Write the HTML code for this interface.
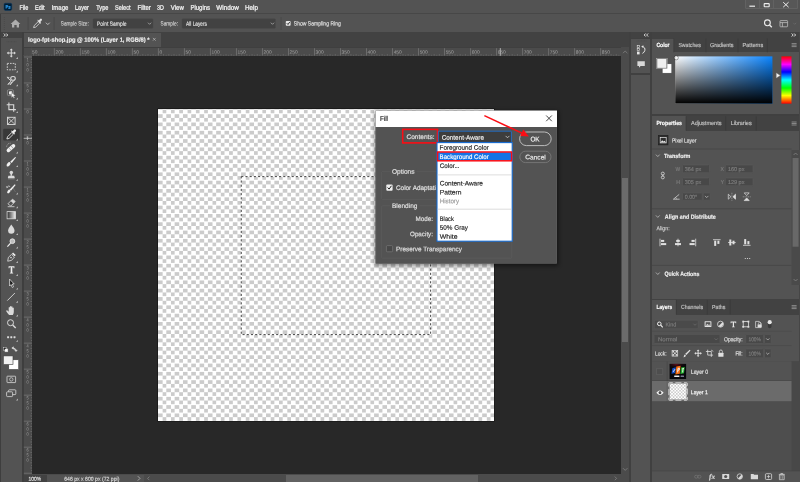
<!DOCTYPE html>
<html><head><meta charset="utf-8"><title>Photoshop - Fill</title>
<style>
html,body{margin:0;padding:0;background:#535353;}
body{width:800px;height:482px;overflow:hidden;position:relative;font-family:"Liberation Sans",sans-serif;}
#app{position:absolute;left:0;top:0;width:800px;height:482px;overflow:hidden;}
#app>div{position:absolute;}
.chk{background-color:#fff;background-image:conic-gradient(#cbcbcb 25%,#fff 0 50%,#cbcbcb 0 75%,#fff 0);}
svg#ov{position:absolute;left:0;top:0;will-change:transform;}
svg text{font-family:"Liberation Sans",sans-serif;white-space:pre;stroke-width:0.16px;text-rendering:geometricPrecision;}
</style></head><body><div id="app">
<div style="left:0.00px;top:0.00px;width:800.00px;height:482.00px;background:#535353;"></div>
<div style="left:0.00px;top:0.00px;width:800.00px;height:13.00px;background:#535353;"></div>
<div style="left:0.00px;top:13.00px;width:800.00px;height:1.00px;background:#474747;"></div>
<div style="left:0.00px;top:14.00px;width:800.00px;height:18.00px;background:#535353;"></div>
<div style="left:0.00px;top:32.00px;width:630.00px;height:15.00px;background:#424242;"></div>
<div style="left:23.50px;top:32.50px;width:137.50px;height:14.50px;background:#535353;"></div>
<div style="left:0.00px;top:37.50px;width:22.00px;height:444.50px;background:#535353;"></div>
<div style="left:0.00px;top:14.00px;width:1.20px;height:468.00px;background:#3e3e3e;"></div>
<div style="left:22.00px;top:32.00px;width:1.50px;height:450.00px;background:#3e3e3e;"></div>
<div style="left:23.50px;top:47.00px;width:597.30px;height:9.00px;background:#4b4b4b;"></div>
<div style="left:23.50px;top:47.00px;width:8.00px;height:428.00px;background:#4b4b4b;"></div>
<div style="left:23.50px;top:46.70px;width:605.90px;height:0.90px;background:#3f3f3f;"></div>
<div style="left:31.50px;top:56.00px;width:589.30px;height:418.00px;background:#282828;"></div>
<div style="left:620.80px;top:47.00px;width:8.60px;height:427.00px;background:#4b4b4b;"></div>
<div style="left:621.90px;top:177.50px;width:6.40px;height:164.20px;background:#6b6b6b;"></div>
<div style="left:23.50px;top:474.00px;width:605.90px;height:8.00px;background:#4b4b4b;"></div>
<div style="left:23.50px;top:475.00px;width:23.50px;height:7.00px;background:#424242;"></div>
<div style="left:47.00px;top:475.00px;width:97.00px;height:7.00px;background:#535353;"></div>
<div style="left:286.30px;top:475.00px;width:192.20px;height:7.00px;background:#626262;"></div>
<div style="left:629.40px;top:32.00px;width:170.60px;height:450.00px;background:#404040;"></div>
<div style="left:630.80px;top:32.00px;width:19.40px;height:5.80px;background:#424242;"></div>
<div style="left:630.80px;top:38.60px;width:19.40px;height:34.40px;background:#535353;"></div>
<div style="left:630.80px;top:75.00px;width:19.40px;height:407.00px;background:#535353;"></div>
<div style="left:652.20px;top:32.00px;width:147.80px;height:6.60px;background:#424242;"></div>
<div style="left:652.00px;top:38.50px;width:148.00px;height:13.80px;background:#424242;"></div>
<div style="left:652.00px;top:38.50px;width:21.70px;height:13.80px;background:#535353;"></div>
<div style="left:652.00px;top:52.30px;width:148.00px;height:62.20px;background:#535353;"></div>
<div style="left:652.00px;top:116.20px;width:148.00px;height:14.50px;background:#424242;"></div>
<div style="left:652.00px;top:116.20px;width:34.00px;height:14.50px;background:#535353;"></div>
<div style="left:652.00px;top:130.70px;width:148.00px;height:167.90px;background:#535353;"></div>
<div style="left:652.00px;top:299.40px;width:148.00px;height:15.20px;background:#424242;"></div>
<div style="left:652.00px;top:299.60px;width:24.30px;height:15.00px;background:#535353;"></div>
<div style="left:652.00px;top:314.60px;width:148.00px;height:167.40px;background:#535353;"></div>
<div style="left:799.00px;top:32.00px;width:1.00px;height:450.00px;background:#464646;"></div>
<div class="chk" style="left:158.00px;top:109.00px;width:336.11px;height:312.18px;background-size:8.325px 8.325px;background-position:0 0.6px;"></div>
<div style="left:745.20px;top:0.00px;width:14.40px;height:9.40px;background:#575757;border:0.5px solid #626262;border-top:0;box-sizing:border-box;border-radius:0 0 0 1.5px"></div>
<div style="left:759.60px;top:0.00px;width:14.80px;height:9.40px;background:#575757;border:0.5px solid #626262;border-top:0;border-left:0;box-sizing:border-box"></div>
<div style="left:774.40px;top:0.00px;width:23.60px;height:9.40px;background:#575757;border:0.5px solid #626262;border-top:0;border-left:0;box-sizing:border-box;border-radius:0 0 1.5px 0"></div>
<svg id="ov" width="800" height="482" viewBox="0 0 800 482">
<rect x="4.00" y="3.20" width="7.80" height="7.20" fill="#001e36" stroke="#0b3c66" stroke-width="0.5" rx="1.4" />
<text x="5.40" y="8.63" font-size="4.8" fill="#31a8ff" stroke="#31a8ff" font-weight="bold" textLength="5.20" lengthAdjust="spacingAndGlyphs" transform="rotate(0.05 5.4 8.6)">Ps</text>
<text style="stroke-width:0.3px" x="19.50" y="9.68" font-size="6.6" fill="#ececec" stroke="#ececec" textLength="8.80" lengthAdjust="spacingAndGlyphs" transform="rotate(0.05 19.5 9.7)">File</text>
<text style="stroke-width:0.3px" x="35.00" y="9.68" font-size="6.6" fill="#ececec" stroke="#ececec" textLength="9.50" lengthAdjust="spacingAndGlyphs" transform="rotate(0.05 35.0 9.7)">Edit</text>
<text style="stroke-width:0.3px" x="51.70" y="9.68" font-size="6.6" fill="#ececec" stroke="#ececec" textLength="16.60" lengthAdjust="spacingAndGlyphs" transform="rotate(0.05 51.7 9.7)">Image</text>
<text style="stroke-width:0.3px" x="75.00" y="9.68" font-size="6.6" fill="#ececec" stroke="#ececec" textLength="13.80" lengthAdjust="spacingAndGlyphs" transform="rotate(0.05 75.0 9.7)">Layer</text>
<text style="stroke-width:0.3px" x="96.30" y="9.68" font-size="6.6" fill="#ececec" stroke="#ececec" textLength="12.00" lengthAdjust="spacingAndGlyphs" transform="rotate(0.05 96.3 9.7)">Type</text>
<text style="stroke-width:0.3px" x="115.00" y="9.68" font-size="6.6" fill="#ececec" stroke="#ececec" textLength="15.50" lengthAdjust="spacingAndGlyphs" transform="rotate(0.05 115.0 9.7)">Select</text>
<text style="stroke-width:0.3px" x="137.50" y="9.68" font-size="6.6" fill="#ececec" stroke="#ececec" textLength="13.30" lengthAdjust="spacingAndGlyphs" transform="rotate(0.05 137.5 9.7)">Filter</text>
<text style="stroke-width:0.3px" x="157.00" y="9.68" font-size="6.6" fill="#ececec" stroke="#ececec" textLength="6.80" lengthAdjust="spacingAndGlyphs" transform="rotate(0.05 157.0 9.7)">3D</text>
<text style="stroke-width:0.3px" x="170.80" y="9.68" font-size="6.6" fill="#ececec" stroke="#ececec" textLength="13.00" lengthAdjust="spacingAndGlyphs" transform="rotate(0.05 170.8 9.7)">View</text>
<text style="stroke-width:0.3px" x="190.50" y="9.68" font-size="6.6" fill="#ececec" stroke="#ececec" textLength="19.50" lengthAdjust="spacingAndGlyphs" transform="rotate(0.05 190.5 9.7)">Plugins</text>
<text style="stroke-width:0.3px" x="216.30" y="9.68" font-size="6.6" fill="#ececec" stroke="#ececec" textLength="22.50" lengthAdjust="spacingAndGlyphs" transform="rotate(0.05 216.3 9.7)">Window</text>
<text style="stroke-width:0.3px" x="245.00" y="9.68" font-size="6.6" fill="#ececec" stroke="#ececec" textLength="13.00" lengthAdjust="spacingAndGlyphs" transform="rotate(0.05 245.0 9.7)">Help</text>
<line x1="749.40" y1="6.20" x2="755.00" y2="6.20" stroke="#ececec" stroke-width="1.2" />
<rect x="764.20" y="3.60" width="5.00" height="3.10" fill="none" stroke="#ececec" stroke-width="1.1" rx="0.5" />
<path d="M783.2 2.2 L788.6 7.2 M788.6 2.2 L783.2 7.2" fill="none" stroke="#ececec" stroke-width="1.0" />
<rect x="3.80" y="17.20" width="0.90" height="0.80" fill="#474747" stroke="none" stroke-width="1" rx="0" />
<rect x="3.80" y="19.20" width="0.90" height="0.80" fill="#474747" stroke="none" stroke-width="1" rx="0" />
<rect x="3.80" y="21.20" width="0.90" height="0.80" fill="#474747" stroke="none" stroke-width="1" rx="0" />
<rect x="3.80" y="23.20" width="0.90" height="0.80" fill="#474747" stroke="none" stroke-width="1" rx="0" />
<rect x="3.80" y="25.20" width="0.90" height="0.80" fill="#474747" stroke="none" stroke-width="1" rx="0" />
<rect x="3.80" y="27.20" width="0.90" height="0.80" fill="#474747" stroke="none" stroke-width="1" rx="0" />
<rect x="3.80" y="29.20" width="0.90" height="0.80" fill="#474747" stroke="none" stroke-width="1" rx="0" />
<path d="M10.6 24 L15.5 19.6 L20.4 24 L19 24 L19 27.6 L16.7 27.6 L16.7 25 L14.3 25 L14.3 27.6 L12 27.6 L12 24 Z" fill="#adadad" stroke="none" stroke-width="1" />
<line x1="28.10" y1="17.00" x2="28.10" y2="30.00" stroke="#474747" stroke-width="0.9" />
<path d="M33.6 27.6 L34.2 25.6 L38.3 21.5 L39.8 23 L35.7 27.1 Z" fill="none" stroke="#e0e0e0" stroke-width="0.8" />
<path d="M37.6 20.9 L40.4 23.7 L41.2 22.9 L40.3 22 L41.7 20.6 A1.1 1.1 0 0 0 40.1 19 L38.7 20.4 L37.8 19.5 Z" fill="#e0e0e0" stroke="none" stroke-width="1" />
<path d="M45.9 22.7 L47.8 24.6 L49.7 22.7" fill="none" stroke="#c8c8c8" stroke-width="0.9" />
<line x1="54.10" y1="17.00" x2="54.10" y2="30.00" stroke="#474747" stroke-width="0.9" />
<text x="60.80" y="25.56" font-size="6.0" fill="#cfcfcf" stroke="#cfcfcf" textLength="28.00" lengthAdjust="spacingAndGlyphs" transform="rotate(0.05 60.8 25.6)">Sample Size:</text>
<rect x="93.00" y="18.80" width="60.00" height="9.50" fill="#424242" stroke="#4a4a4a" stroke-width="0.5" rx="1" />
<text x="97.00" y="25.66" font-size="6.0" fill="#e0e0e0" stroke="#e0e0e0" textLength="29.50" lengthAdjust="spacingAndGlyphs" transform="rotate(0.05 97.0 25.7)">Point Sample</text>
<path d="M148 22.7 L149.6 24.3 L151.2 22.7" fill="none" stroke="#c0c0c0" stroke-width="0.7" />
<text x="160.50" y="25.56" font-size="6.0" fill="#cfcfcf" stroke="#cfcfcf" textLength="17.50" lengthAdjust="spacingAndGlyphs" transform="rotate(0.05 160.5 25.6)">Sample:</text>
<rect x="182.00" y="18.80" width="93.50" height="9.50" fill="#424242" stroke="#4a4a4a" stroke-width="0.5" rx="1" />
<text x="186.00" y="25.66" font-size="6.0" fill="#e0e0e0" stroke="#e0e0e0" textLength="21.00" lengthAdjust="spacingAndGlyphs" transform="rotate(0.05 186.0 25.7)">All Layers</text>
<path d="M270.9 22.7 L272.5 24.3 L274.1 22.7" fill="none" stroke="#c0c0c0" stroke-width="0.7" />
<line x1="281.00" y1="17.00" x2="281.00" y2="30.00" stroke="#474747" stroke-width="0.9" />
<rect x="285.80" y="20.90" width="4.80" height="4.80" fill="#e8e8e8" stroke="none" stroke-width="1" rx="0.8" />
<path d="M286.8 23.2 L288 24.5 L289.8 21.9" fill="none" stroke="#222" stroke-width="0.9" />
<text x="293.80" y="25.56" font-size="6.0" fill="#e0e0e0" stroke="#e0e0e0" textLength="47.00" lengthAdjust="spacingAndGlyphs" transform="rotate(0.05 293.8 25.6)">Show Sampling Ring</text>
<circle cx="767.4" cy="22.8" r="2.9" fill="none" stroke="#ececec" stroke-width="1.1"/>
<line x1="769.50" y1="25.00" x2="771.80" y2="27.20" stroke="#ececec" stroke-width="1.4" />
<rect x="780.00" y="20.60" width="7.60" height="6.20" fill="none" stroke="#bdbdbd" stroke-width="0.8" rx="0.6" />
<line x1="782.40" y1="22.60" x2="782.40" y2="26.80" stroke="#bdbdbd" stroke-width="0.8" />
<line x1="780.00" y1="22.60" x2="787.60" y2="22.60" stroke="#bdbdbd" stroke-width="0.8" />
<path d="M793.2 22.8 L794.7 24.3 L796.2 22.8" fill="none" stroke="#6e6e6e" stroke-width="0.7" />
<text x="28.00" y="41.63" font-size="6.2" fill="#f0f0f0" stroke="#f0f0f0" font-weight="bold" textLength="121.50" lengthAdjust="spacingAndGlyphs" transform="rotate(0.05 28.0 41.6)">logo-fpt-shop.jpg @ 100% (Layer 1, RGB/8) *</text>
<path d="M152.9 37.9 L155.7 40.7 M155.7 37.9 L152.9 40.7" fill="none" stroke="#c8c8c8" stroke-width="0.6" />
<path d="M3.8 33.5 L5.3 35 L3.8 36.5 M6.2 33.5 L7.7 35 L6.2 36.5" fill="none" stroke="#f4f4f4" stroke-width="0.9" />
<rect x="6.60" y="41.40" width="0.80" height="0.70" fill="#474747" stroke="none" stroke-width="1" rx="0" />
<rect x="8.10" y="41.40" width="0.80" height="0.70" fill="#474747" stroke="none" stroke-width="1" rx="0" />
<rect x="9.60" y="41.40" width="0.80" height="0.70" fill="#474747" stroke="none" stroke-width="1" rx="0" />
<rect x="11.10" y="41.40" width="0.80" height="0.70" fill="#474747" stroke="none" stroke-width="1" rx="0" />
<rect x="12.60" y="41.40" width="0.80" height="0.70" fill="#474747" stroke="none" stroke-width="1" rx="0" />
<rect x="14.10" y="41.40" width="0.80" height="0.70" fill="#474747" stroke="none" stroke-width="1" rx="0" />
<rect x="15.60" y="41.40" width="0.80" height="0.70" fill="#474747" stroke="none" stroke-width="1" rx="0" />
<g id="rulers">
<line x1="31.60" y1="47.60" x2="31.60" y2="55.80" stroke="#5e5e5e" stroke-width="0.5" stroke-dasharray="0.7 0.7"/>
<line x1="23.20" y1="55.40" x2="32.00" y2="55.40" stroke="#5e5e5e" stroke-width="0.5" stroke-dasharray="0.7 0.7"/>
<clipPath id="hr"><rect x="32.0" y="47.6" width="588.8" height="8.199999999999996"/></clipPath><g clip-path="url(#hr)">
<line x1="2.31" y1="48.20" x2="2.31" y2="55.80" stroke="#8a8a8a" stroke-width="0.55" />
<text x="3.41" y="53.76" font-size="4.9" fill="#a4a4a4" stroke="none" textLength="8.10" lengthAdjust="spacingAndGlyphs" transform="rotate(0.05 3.4 53.8)">300</text>
<line x1="28.33" y1="48.20" x2="28.33" y2="55.80" stroke="#8a8a8a" stroke-width="0.55" />
<text x="29.43" y="53.76" font-size="4.9" fill="#a4a4a4" stroke="none" textLength="8.10" lengthAdjust="spacingAndGlyphs" transform="rotate(0.05 29.4 53.8)">250</text>
<line x1="54.34" y1="48.20" x2="54.34" y2="55.80" stroke="#8a8a8a" stroke-width="0.55" />
<text x="55.44" y="53.76" font-size="4.9" fill="#a4a4a4" stroke="none" textLength="8.10" lengthAdjust="spacingAndGlyphs" transform="rotate(0.05 55.4 53.8)">200</text>
<line x1="80.36" y1="48.20" x2="80.36" y2="55.80" stroke="#8a8a8a" stroke-width="0.55" />
<text x="81.45" y="53.76" font-size="4.9" fill="#a4a4a4" stroke="none" textLength="8.10" lengthAdjust="spacingAndGlyphs" transform="rotate(0.05 81.5 53.8)">150</text>
<line x1="106.37" y1="48.20" x2="106.37" y2="55.80" stroke="#8a8a8a" stroke-width="0.55" />
<text x="107.47" y="53.76" font-size="4.9" fill="#a4a4a4" stroke="none" textLength="8.10" lengthAdjust="spacingAndGlyphs" transform="rotate(0.05 107.5 53.8)">100</text>
<line x1="132.38" y1="48.20" x2="132.38" y2="55.80" stroke="#8a8a8a" stroke-width="0.55" />
<text x="133.48" y="53.76" font-size="4.9" fill="#a4a4a4" stroke="none" textLength="5.40" lengthAdjust="spacingAndGlyphs" transform="rotate(0.05 133.5 53.8)">50</text>
<line x1="158.40" y1="48.20" x2="158.40" y2="55.80" stroke="#8a8a8a" stroke-width="0.55" />
<text x="159.50" y="53.76" font-size="4.9" fill="#a4a4a4" stroke="none" textLength="2.70" lengthAdjust="spacingAndGlyphs" transform="rotate(0.05 159.5 53.8)">0</text>
<line x1="184.42" y1="48.20" x2="184.42" y2="55.80" stroke="#8a8a8a" stroke-width="0.55" />
<text x="185.52" y="53.76" font-size="4.9" fill="#a4a4a4" stroke="none" textLength="5.40" lengthAdjust="spacingAndGlyphs" transform="rotate(0.05 185.5 53.8)">50</text>
<line x1="210.43" y1="48.20" x2="210.43" y2="55.80" stroke="#8a8a8a" stroke-width="0.55" />
<text x="211.53" y="53.76" font-size="4.9" fill="#a4a4a4" stroke="none" textLength="8.10" lengthAdjust="spacingAndGlyphs" transform="rotate(0.05 211.5 53.8)">100</text>
<line x1="236.44" y1="48.20" x2="236.44" y2="55.80" stroke="#8a8a8a" stroke-width="0.55" />
<text x="237.54" y="53.76" font-size="4.9" fill="#a4a4a4" stroke="none" textLength="8.10" lengthAdjust="spacingAndGlyphs" transform="rotate(0.05 237.5 53.8)">150</text>
<line x1="262.46" y1="48.20" x2="262.46" y2="55.80" stroke="#8a8a8a" stroke-width="0.55" />
<text x="263.56" y="53.76" font-size="4.9" fill="#a4a4a4" stroke="none" textLength="8.10" lengthAdjust="spacingAndGlyphs" transform="rotate(0.05 263.6 53.8)">200</text>
<line x1="288.48" y1="48.20" x2="288.48" y2="55.80" stroke="#8a8a8a" stroke-width="0.55" />
<text x="289.58" y="53.76" font-size="4.9" fill="#a4a4a4" stroke="none" textLength="8.10" lengthAdjust="spacingAndGlyphs" transform="rotate(0.05 289.6 53.8)">250</text>
<line x1="314.49" y1="48.20" x2="314.49" y2="55.80" stroke="#8a8a8a" stroke-width="0.55" />
<text x="315.59" y="53.76" font-size="4.9" fill="#a4a4a4" stroke="none" textLength="8.10" lengthAdjust="spacingAndGlyphs" transform="rotate(0.05 315.6 53.8)">300</text>
<line x1="340.50" y1="48.20" x2="340.50" y2="55.80" stroke="#8a8a8a" stroke-width="0.55" />
<text x="341.61" y="53.76" font-size="4.9" fill="#a4a4a4" stroke="none" textLength="8.10" lengthAdjust="spacingAndGlyphs" transform="rotate(0.05 341.6 53.8)">350</text>
<line x1="366.52" y1="48.20" x2="366.52" y2="55.80" stroke="#8a8a8a" stroke-width="0.55" />
<text x="367.62" y="53.76" font-size="4.9" fill="#a4a4a4" stroke="none" textLength="8.10" lengthAdjust="spacingAndGlyphs" transform="rotate(0.05 367.6 53.8)">400</text>
<line x1="392.53" y1="48.20" x2="392.53" y2="55.80" stroke="#8a8a8a" stroke-width="0.55" />
<text x="393.63" y="53.76" font-size="4.9" fill="#a4a4a4" stroke="none" textLength="8.10" lengthAdjust="spacingAndGlyphs" transform="rotate(0.05 393.6 53.8)">450</text>
<line x1="418.55" y1="48.20" x2="418.55" y2="55.80" stroke="#8a8a8a" stroke-width="0.55" />
<text x="419.65" y="53.76" font-size="4.9" fill="#a4a4a4" stroke="none" textLength="8.10" lengthAdjust="spacingAndGlyphs" transform="rotate(0.05 419.6 53.8)">500</text>
<line x1="444.56" y1="48.20" x2="444.56" y2="55.80" stroke="#8a8a8a" stroke-width="0.55" />
<text x="445.66" y="53.76" font-size="4.9" fill="#a4a4a4" stroke="none" textLength="8.10" lengthAdjust="spacingAndGlyphs" transform="rotate(0.05 445.7 53.8)">550</text>
<line x1="470.58" y1="48.20" x2="470.58" y2="55.80" stroke="#8a8a8a" stroke-width="0.55" />
<text x="471.68" y="53.76" font-size="4.9" fill="#a4a4a4" stroke="none" textLength="8.10" lengthAdjust="spacingAndGlyphs" transform="rotate(0.05 471.7 53.8)">600</text>
<line x1="496.60" y1="48.20" x2="496.60" y2="55.80" stroke="#8a8a8a" stroke-width="0.55" />
<text x="497.70" y="53.76" font-size="4.9" fill="#a4a4a4" stroke="none" textLength="8.10" lengthAdjust="spacingAndGlyphs" transform="rotate(0.05 497.7 53.8)">650</text>
<line x1="522.61" y1="48.20" x2="522.61" y2="55.80" stroke="#8a8a8a" stroke-width="0.55" />
<text x="523.71" y="53.76" font-size="4.9" fill="#a4a4a4" stroke="none" textLength="8.10" lengthAdjust="spacingAndGlyphs" transform="rotate(0.05 523.7 53.8)">700</text>
<line x1="548.62" y1="48.20" x2="548.62" y2="55.80" stroke="#8a8a8a" stroke-width="0.55" />
<text x="549.73" y="53.76" font-size="4.9" fill="#a4a4a4" stroke="none" textLength="8.10" lengthAdjust="spacingAndGlyphs" transform="rotate(0.05 549.7 53.8)">750</text>
<line x1="574.64" y1="48.20" x2="574.64" y2="55.80" stroke="#8a8a8a" stroke-width="0.55" />
<text x="575.74" y="53.76" font-size="4.9" fill="#a4a4a4" stroke="none" textLength="8.10" lengthAdjust="spacingAndGlyphs" transform="rotate(0.05 575.7 53.8)">800</text>
<line x1="600.65" y1="48.20" x2="600.65" y2="55.80" stroke="#8a8a8a" stroke-width="0.55" />
<text x="601.75" y="53.76" font-size="4.9" fill="#a4a4a4" stroke="none" textLength="8.10" lengthAdjust="spacingAndGlyphs" transform="rotate(0.05 601.8 53.8)">850</text>
<line x1="4.91" y1="54.80" x2="4.91" y2="55.80" stroke="#8a8a8a" stroke-width="0.45" />
<line x1="7.51" y1="54.20" x2="7.51" y2="55.80" stroke="#8a8a8a" stroke-width="0.45" />
<line x1="10.11" y1="54.80" x2="10.11" y2="55.80" stroke="#8a8a8a" stroke-width="0.45" />
<line x1="12.72" y1="54.20" x2="12.72" y2="55.80" stroke="#8a8a8a" stroke-width="0.45" />
<line x1="15.32" y1="54.80" x2="15.32" y2="55.80" stroke="#8a8a8a" stroke-width="0.45" />
<line x1="17.92" y1="54.20" x2="17.92" y2="55.80" stroke="#8a8a8a" stroke-width="0.45" />
<line x1="20.52" y1="54.80" x2="20.52" y2="55.80" stroke="#8a8a8a" stroke-width="0.45" />
<line x1="23.12" y1="54.20" x2="23.12" y2="55.80" stroke="#8a8a8a" stroke-width="0.45" />
<line x1="25.72" y1="54.80" x2="25.72" y2="55.80" stroke="#8a8a8a" stroke-width="0.45" />
<line x1="30.93" y1="54.80" x2="30.93" y2="55.80" stroke="#8a8a8a" stroke-width="0.45" />
<line x1="33.53" y1="54.20" x2="33.53" y2="55.80" stroke="#8a8a8a" stroke-width="0.45" />
<line x1="36.13" y1="54.80" x2="36.13" y2="55.80" stroke="#8a8a8a" stroke-width="0.45" />
<line x1="38.73" y1="54.20" x2="38.73" y2="55.80" stroke="#8a8a8a" stroke-width="0.45" />
<line x1="41.33" y1="54.80" x2="41.33" y2="55.80" stroke="#8a8a8a" stroke-width="0.45" />
<line x1="43.93" y1="54.20" x2="43.93" y2="55.80" stroke="#8a8a8a" stroke-width="0.45" />
<line x1="46.54" y1="54.80" x2="46.54" y2="55.80" stroke="#8a8a8a" stroke-width="0.45" />
<line x1="49.14" y1="54.20" x2="49.14" y2="55.80" stroke="#8a8a8a" stroke-width="0.45" />
<line x1="51.74" y1="54.80" x2="51.74" y2="55.80" stroke="#8a8a8a" stroke-width="0.45" />
<line x1="56.94" y1="54.80" x2="56.94" y2="55.80" stroke="#8a8a8a" stroke-width="0.45" />
<line x1="59.54" y1="54.20" x2="59.54" y2="55.80" stroke="#8a8a8a" stroke-width="0.45" />
<line x1="62.14" y1="54.80" x2="62.14" y2="55.80" stroke="#8a8a8a" stroke-width="0.45" />
<line x1="64.75" y1="54.20" x2="64.75" y2="55.80" stroke="#8a8a8a" stroke-width="0.45" />
<line x1="67.35" y1="54.80" x2="67.35" y2="55.80" stroke="#8a8a8a" stroke-width="0.45" />
<line x1="69.95" y1="54.20" x2="69.95" y2="55.80" stroke="#8a8a8a" stroke-width="0.45" />
<line x1="72.55" y1="54.80" x2="72.55" y2="55.80" stroke="#8a8a8a" stroke-width="0.45" />
<line x1="75.15" y1="54.20" x2="75.15" y2="55.80" stroke="#8a8a8a" stroke-width="0.45" />
<line x1="77.75" y1="54.80" x2="77.75" y2="55.80" stroke="#8a8a8a" stroke-width="0.45" />
<line x1="82.96" y1="54.80" x2="82.96" y2="55.80" stroke="#8a8a8a" stroke-width="0.45" />
<line x1="85.56" y1="54.20" x2="85.56" y2="55.80" stroke="#8a8a8a" stroke-width="0.45" />
<line x1="88.16" y1="54.80" x2="88.16" y2="55.80" stroke="#8a8a8a" stroke-width="0.45" />
<line x1="90.76" y1="54.20" x2="90.76" y2="55.80" stroke="#8a8a8a" stroke-width="0.45" />
<line x1="93.36" y1="54.80" x2="93.36" y2="55.80" stroke="#8a8a8a" stroke-width="0.45" />
<line x1="95.96" y1="54.20" x2="95.96" y2="55.80" stroke="#8a8a8a" stroke-width="0.45" />
<line x1="98.57" y1="54.80" x2="98.57" y2="55.80" stroke="#8a8a8a" stroke-width="0.45" />
<line x1="101.17" y1="54.20" x2="101.17" y2="55.80" stroke="#8a8a8a" stroke-width="0.45" />
<line x1="103.77" y1="54.80" x2="103.77" y2="55.80" stroke="#8a8a8a" stroke-width="0.45" />
<line x1="108.97" y1="54.80" x2="108.97" y2="55.80" stroke="#8a8a8a" stroke-width="0.45" />
<line x1="111.57" y1="54.20" x2="111.57" y2="55.80" stroke="#8a8a8a" stroke-width="0.45" />
<line x1="114.17" y1="54.80" x2="114.17" y2="55.80" stroke="#8a8a8a" stroke-width="0.45" />
<line x1="116.78" y1="54.20" x2="116.78" y2="55.80" stroke="#8a8a8a" stroke-width="0.45" />
<line x1="119.38" y1="54.80" x2="119.38" y2="55.80" stroke="#8a8a8a" stroke-width="0.45" />
<line x1="121.98" y1="54.20" x2="121.98" y2="55.80" stroke="#8a8a8a" stroke-width="0.45" />
<line x1="124.58" y1="54.80" x2="124.58" y2="55.80" stroke="#8a8a8a" stroke-width="0.45" />
<line x1="127.18" y1="54.20" x2="127.18" y2="55.80" stroke="#8a8a8a" stroke-width="0.45" />
<line x1="129.78" y1="54.80" x2="129.78" y2="55.80" stroke="#8a8a8a" stroke-width="0.45" />
<line x1="134.99" y1="54.80" x2="134.99" y2="55.80" stroke="#8a8a8a" stroke-width="0.45" />
<line x1="137.59" y1="54.20" x2="137.59" y2="55.80" stroke="#8a8a8a" stroke-width="0.45" />
<line x1="140.19" y1="54.80" x2="140.19" y2="55.80" stroke="#8a8a8a" stroke-width="0.45" />
<line x1="142.79" y1="54.20" x2="142.79" y2="55.80" stroke="#8a8a8a" stroke-width="0.45" />
<line x1="145.39" y1="54.80" x2="145.39" y2="55.80" stroke="#8a8a8a" stroke-width="0.45" />
<line x1="147.99" y1="54.20" x2="147.99" y2="55.80" stroke="#8a8a8a" stroke-width="0.45" />
<line x1="150.60" y1="54.80" x2="150.60" y2="55.80" stroke="#8a8a8a" stroke-width="0.45" />
<line x1="153.20" y1="54.20" x2="153.20" y2="55.80" stroke="#8a8a8a" stroke-width="0.45" />
<line x1="155.80" y1="54.80" x2="155.80" y2="55.80" stroke="#8a8a8a" stroke-width="0.45" />
<line x1="161.00" y1="54.80" x2="161.00" y2="55.80" stroke="#8a8a8a" stroke-width="0.45" />
<line x1="163.60" y1="54.20" x2="163.60" y2="55.80" stroke="#8a8a8a" stroke-width="0.45" />
<line x1="166.20" y1="54.80" x2="166.20" y2="55.80" stroke="#8a8a8a" stroke-width="0.45" />
<line x1="168.81" y1="54.20" x2="168.81" y2="55.80" stroke="#8a8a8a" stroke-width="0.45" />
<line x1="171.41" y1="54.80" x2="171.41" y2="55.80" stroke="#8a8a8a" stroke-width="0.45" />
<line x1="174.01" y1="54.20" x2="174.01" y2="55.80" stroke="#8a8a8a" stroke-width="0.45" />
<line x1="176.61" y1="54.80" x2="176.61" y2="55.80" stroke="#8a8a8a" stroke-width="0.45" />
<line x1="179.21" y1="54.20" x2="179.21" y2="55.80" stroke="#8a8a8a" stroke-width="0.45" />
<line x1="181.81" y1="54.80" x2="181.81" y2="55.80" stroke="#8a8a8a" stroke-width="0.45" />
<line x1="187.02" y1="54.80" x2="187.02" y2="55.80" stroke="#8a8a8a" stroke-width="0.45" />
<line x1="189.62" y1="54.20" x2="189.62" y2="55.80" stroke="#8a8a8a" stroke-width="0.45" />
<line x1="192.22" y1="54.80" x2="192.22" y2="55.80" stroke="#8a8a8a" stroke-width="0.45" />
<line x1="194.82" y1="54.20" x2="194.82" y2="55.80" stroke="#8a8a8a" stroke-width="0.45" />
<line x1="197.42" y1="54.80" x2="197.42" y2="55.80" stroke="#8a8a8a" stroke-width="0.45" />
<line x1="200.02" y1="54.20" x2="200.02" y2="55.80" stroke="#8a8a8a" stroke-width="0.45" />
<line x1="202.63" y1="54.80" x2="202.63" y2="55.80" stroke="#8a8a8a" stroke-width="0.45" />
<line x1="205.23" y1="54.20" x2="205.23" y2="55.80" stroke="#8a8a8a" stroke-width="0.45" />
<line x1="207.83" y1="54.80" x2="207.83" y2="55.80" stroke="#8a8a8a" stroke-width="0.45" />
<line x1="213.03" y1="54.80" x2="213.03" y2="55.80" stroke="#8a8a8a" stroke-width="0.45" />
<line x1="215.63" y1="54.20" x2="215.63" y2="55.80" stroke="#8a8a8a" stroke-width="0.45" />
<line x1="218.23" y1="54.80" x2="218.23" y2="55.80" stroke="#8a8a8a" stroke-width="0.45" />
<line x1="220.84" y1="54.20" x2="220.84" y2="55.80" stroke="#8a8a8a" stroke-width="0.45" />
<line x1="223.44" y1="54.80" x2="223.44" y2="55.80" stroke="#8a8a8a" stroke-width="0.45" />
<line x1="226.04" y1="54.20" x2="226.04" y2="55.80" stroke="#8a8a8a" stroke-width="0.45" />
<line x1="228.64" y1="54.80" x2="228.64" y2="55.80" stroke="#8a8a8a" stroke-width="0.45" />
<line x1="231.24" y1="54.20" x2="231.24" y2="55.80" stroke="#8a8a8a" stroke-width="0.45" />
<line x1="233.84" y1="54.80" x2="233.84" y2="55.80" stroke="#8a8a8a" stroke-width="0.45" />
<line x1="239.05" y1="54.80" x2="239.05" y2="55.80" stroke="#8a8a8a" stroke-width="0.45" />
<line x1="241.65" y1="54.20" x2="241.65" y2="55.80" stroke="#8a8a8a" stroke-width="0.45" />
<line x1="244.25" y1="54.80" x2="244.25" y2="55.80" stroke="#8a8a8a" stroke-width="0.45" />
<line x1="246.85" y1="54.20" x2="246.85" y2="55.80" stroke="#8a8a8a" stroke-width="0.45" />
<line x1="249.45" y1="54.80" x2="249.45" y2="55.80" stroke="#8a8a8a" stroke-width="0.45" />
<line x1="252.05" y1="54.20" x2="252.05" y2="55.80" stroke="#8a8a8a" stroke-width="0.45" />
<line x1="254.66" y1="54.80" x2="254.66" y2="55.80" stroke="#8a8a8a" stroke-width="0.45" />
<line x1="257.26" y1="54.20" x2="257.26" y2="55.80" stroke="#8a8a8a" stroke-width="0.45" />
<line x1="259.86" y1="54.80" x2="259.86" y2="55.80" stroke="#8a8a8a" stroke-width="0.45" />
<line x1="265.06" y1="54.80" x2="265.06" y2="55.80" stroke="#8a8a8a" stroke-width="0.45" />
<line x1="267.66" y1="54.20" x2="267.66" y2="55.80" stroke="#8a8a8a" stroke-width="0.45" />
<line x1="270.26" y1="54.80" x2="270.26" y2="55.80" stroke="#8a8a8a" stroke-width="0.45" />
<line x1="272.87" y1="54.20" x2="272.87" y2="55.80" stroke="#8a8a8a" stroke-width="0.45" />
<line x1="275.47" y1="54.80" x2="275.47" y2="55.80" stroke="#8a8a8a" stroke-width="0.45" />
<line x1="278.07" y1="54.20" x2="278.07" y2="55.80" stroke="#8a8a8a" stroke-width="0.45" />
<line x1="280.67" y1="54.80" x2="280.67" y2="55.80" stroke="#8a8a8a" stroke-width="0.45" />
<line x1="283.27" y1="54.20" x2="283.27" y2="55.80" stroke="#8a8a8a" stroke-width="0.45" />
<line x1="285.87" y1="54.80" x2="285.87" y2="55.80" stroke="#8a8a8a" stroke-width="0.45" />
<line x1="291.08" y1="54.80" x2="291.08" y2="55.80" stroke="#8a8a8a" stroke-width="0.45" />
<line x1="293.68" y1="54.20" x2="293.68" y2="55.80" stroke="#8a8a8a" stroke-width="0.45" />
<line x1="296.28" y1="54.80" x2="296.28" y2="55.80" stroke="#8a8a8a" stroke-width="0.45" />
<line x1="298.88" y1="54.20" x2="298.88" y2="55.80" stroke="#8a8a8a" stroke-width="0.45" />
<line x1="301.48" y1="54.80" x2="301.48" y2="55.80" stroke="#8a8a8a" stroke-width="0.45" />
<line x1="304.08" y1="54.20" x2="304.08" y2="55.80" stroke="#8a8a8a" stroke-width="0.45" />
<line x1="306.69" y1="54.80" x2="306.69" y2="55.80" stroke="#8a8a8a" stroke-width="0.45" />
<line x1="309.29" y1="54.20" x2="309.29" y2="55.80" stroke="#8a8a8a" stroke-width="0.45" />
<line x1="311.89" y1="54.80" x2="311.89" y2="55.80" stroke="#8a8a8a" stroke-width="0.45" />
<line x1="317.09" y1="54.80" x2="317.09" y2="55.80" stroke="#8a8a8a" stroke-width="0.45" />
<line x1="319.69" y1="54.20" x2="319.69" y2="55.80" stroke="#8a8a8a" stroke-width="0.45" />
<line x1="322.29" y1="54.80" x2="322.29" y2="55.80" stroke="#8a8a8a" stroke-width="0.45" />
<line x1="324.90" y1="54.20" x2="324.90" y2="55.80" stroke="#8a8a8a" stroke-width="0.45" />
<line x1="327.50" y1="54.80" x2="327.50" y2="55.80" stroke="#8a8a8a" stroke-width="0.45" />
<line x1="330.10" y1="54.20" x2="330.10" y2="55.80" stroke="#8a8a8a" stroke-width="0.45" />
<line x1="332.70" y1="54.80" x2="332.70" y2="55.80" stroke="#8a8a8a" stroke-width="0.45" />
<line x1="335.30" y1="54.20" x2="335.30" y2="55.80" stroke="#8a8a8a" stroke-width="0.45" />
<line x1="337.90" y1="54.80" x2="337.90" y2="55.80" stroke="#8a8a8a" stroke-width="0.45" />
<line x1="343.11" y1="54.80" x2="343.11" y2="55.80" stroke="#8a8a8a" stroke-width="0.45" />
<line x1="345.71" y1="54.20" x2="345.71" y2="55.80" stroke="#8a8a8a" stroke-width="0.45" />
<line x1="348.31" y1="54.80" x2="348.31" y2="55.80" stroke="#8a8a8a" stroke-width="0.45" />
<line x1="350.91" y1="54.20" x2="350.91" y2="55.80" stroke="#8a8a8a" stroke-width="0.45" />
<line x1="353.51" y1="54.80" x2="353.51" y2="55.80" stroke="#8a8a8a" stroke-width="0.45" />
<line x1="356.11" y1="54.20" x2="356.11" y2="55.80" stroke="#8a8a8a" stroke-width="0.45" />
<line x1="358.72" y1="54.80" x2="358.72" y2="55.80" stroke="#8a8a8a" stroke-width="0.45" />
<line x1="361.32" y1="54.20" x2="361.32" y2="55.80" stroke="#8a8a8a" stroke-width="0.45" />
<line x1="363.92" y1="54.80" x2="363.92" y2="55.80" stroke="#8a8a8a" stroke-width="0.45" />
<line x1="369.12" y1="54.80" x2="369.12" y2="55.80" stroke="#8a8a8a" stroke-width="0.45" />
<line x1="371.72" y1="54.20" x2="371.72" y2="55.80" stroke="#8a8a8a" stroke-width="0.45" />
<line x1="374.32" y1="54.80" x2="374.32" y2="55.80" stroke="#8a8a8a" stroke-width="0.45" />
<line x1="376.93" y1="54.20" x2="376.93" y2="55.80" stroke="#8a8a8a" stroke-width="0.45" />
<line x1="379.53" y1="54.80" x2="379.53" y2="55.80" stroke="#8a8a8a" stroke-width="0.45" />
<line x1="382.13" y1="54.20" x2="382.13" y2="55.80" stroke="#8a8a8a" stroke-width="0.45" />
<line x1="384.73" y1="54.80" x2="384.73" y2="55.80" stroke="#8a8a8a" stroke-width="0.45" />
<line x1="387.33" y1="54.20" x2="387.33" y2="55.80" stroke="#8a8a8a" stroke-width="0.45" />
<line x1="389.93" y1="54.80" x2="389.93" y2="55.80" stroke="#8a8a8a" stroke-width="0.45" />
<line x1="395.14" y1="54.80" x2="395.14" y2="55.80" stroke="#8a8a8a" stroke-width="0.45" />
<line x1="397.74" y1="54.20" x2="397.74" y2="55.80" stroke="#8a8a8a" stroke-width="0.45" />
<line x1="400.34" y1="54.80" x2="400.34" y2="55.80" stroke="#8a8a8a" stroke-width="0.45" />
<line x1="402.94" y1="54.20" x2="402.94" y2="55.80" stroke="#8a8a8a" stroke-width="0.45" />
<line x1="405.54" y1="54.80" x2="405.54" y2="55.80" stroke="#8a8a8a" stroke-width="0.45" />
<line x1="408.14" y1="54.20" x2="408.14" y2="55.80" stroke="#8a8a8a" stroke-width="0.45" />
<line x1="410.75" y1="54.80" x2="410.75" y2="55.80" stroke="#8a8a8a" stroke-width="0.45" />
<line x1="413.35" y1="54.20" x2="413.35" y2="55.80" stroke="#8a8a8a" stroke-width="0.45" />
<line x1="415.95" y1="54.80" x2="415.95" y2="55.80" stroke="#8a8a8a" stroke-width="0.45" />
<line x1="421.15" y1="54.80" x2="421.15" y2="55.80" stroke="#8a8a8a" stroke-width="0.45" />
<line x1="423.75" y1="54.20" x2="423.75" y2="55.80" stroke="#8a8a8a" stroke-width="0.45" />
<line x1="426.35" y1="54.80" x2="426.35" y2="55.80" stroke="#8a8a8a" stroke-width="0.45" />
<line x1="428.96" y1="54.20" x2="428.96" y2="55.80" stroke="#8a8a8a" stroke-width="0.45" />
<line x1="431.56" y1="54.80" x2="431.56" y2="55.80" stroke="#8a8a8a" stroke-width="0.45" />
<line x1="434.16" y1="54.20" x2="434.16" y2="55.80" stroke="#8a8a8a" stroke-width="0.45" />
<line x1="436.76" y1="54.80" x2="436.76" y2="55.80" stroke="#8a8a8a" stroke-width="0.45" />
<line x1="439.36" y1="54.20" x2="439.36" y2="55.80" stroke="#8a8a8a" stroke-width="0.45" />
<line x1="441.96" y1="54.80" x2="441.96" y2="55.80" stroke="#8a8a8a" stroke-width="0.45" />
<line x1="447.17" y1="54.80" x2="447.17" y2="55.80" stroke="#8a8a8a" stroke-width="0.45" />
<line x1="449.77" y1="54.20" x2="449.77" y2="55.80" stroke="#8a8a8a" stroke-width="0.45" />
<line x1="452.37" y1="54.80" x2="452.37" y2="55.80" stroke="#8a8a8a" stroke-width="0.45" />
<line x1="454.97" y1="54.20" x2="454.97" y2="55.80" stroke="#8a8a8a" stroke-width="0.45" />
<line x1="457.57" y1="54.80" x2="457.57" y2="55.80" stroke="#8a8a8a" stroke-width="0.45" />
<line x1="460.17" y1="54.20" x2="460.17" y2="55.80" stroke="#8a8a8a" stroke-width="0.45" />
<line x1="462.78" y1="54.80" x2="462.78" y2="55.80" stroke="#8a8a8a" stroke-width="0.45" />
<line x1="465.38" y1="54.20" x2="465.38" y2="55.80" stroke="#8a8a8a" stroke-width="0.45" />
<line x1="467.98" y1="54.80" x2="467.98" y2="55.80" stroke="#8a8a8a" stroke-width="0.45" />
<line x1="473.18" y1="54.80" x2="473.18" y2="55.80" stroke="#8a8a8a" stroke-width="0.45" />
<line x1="475.78" y1="54.20" x2="475.78" y2="55.80" stroke="#8a8a8a" stroke-width="0.45" />
<line x1="478.38" y1="54.80" x2="478.38" y2="55.80" stroke="#8a8a8a" stroke-width="0.45" />
<line x1="480.99" y1="54.20" x2="480.99" y2="55.80" stroke="#8a8a8a" stroke-width="0.45" />
<line x1="483.59" y1="54.80" x2="483.59" y2="55.80" stroke="#8a8a8a" stroke-width="0.45" />
<line x1="486.19" y1="54.20" x2="486.19" y2="55.80" stroke="#8a8a8a" stroke-width="0.45" />
<line x1="488.79" y1="54.80" x2="488.79" y2="55.80" stroke="#8a8a8a" stroke-width="0.45" />
<line x1="491.39" y1="54.20" x2="491.39" y2="55.80" stroke="#8a8a8a" stroke-width="0.45" />
<line x1="493.99" y1="54.80" x2="493.99" y2="55.80" stroke="#8a8a8a" stroke-width="0.45" />
<line x1="499.20" y1="54.80" x2="499.20" y2="55.80" stroke="#8a8a8a" stroke-width="0.45" />
<line x1="501.80" y1="54.20" x2="501.80" y2="55.80" stroke="#8a8a8a" stroke-width="0.45" />
<line x1="504.40" y1="54.80" x2="504.40" y2="55.80" stroke="#8a8a8a" stroke-width="0.45" />
<line x1="507.00" y1="54.20" x2="507.00" y2="55.80" stroke="#8a8a8a" stroke-width="0.45" />
<line x1="509.60" y1="54.80" x2="509.60" y2="55.80" stroke="#8a8a8a" stroke-width="0.45" />
<line x1="512.20" y1="54.20" x2="512.20" y2="55.80" stroke="#8a8a8a" stroke-width="0.45" />
<line x1="514.81" y1="54.80" x2="514.81" y2="55.80" stroke="#8a8a8a" stroke-width="0.45" />
<line x1="517.41" y1="54.20" x2="517.41" y2="55.80" stroke="#8a8a8a" stroke-width="0.45" />
<line x1="520.01" y1="54.80" x2="520.01" y2="55.80" stroke="#8a8a8a" stroke-width="0.45" />
<line x1="525.21" y1="54.80" x2="525.21" y2="55.80" stroke="#8a8a8a" stroke-width="0.45" />
<line x1="527.81" y1="54.20" x2="527.81" y2="55.80" stroke="#8a8a8a" stroke-width="0.45" />
<line x1="530.41" y1="54.80" x2="530.41" y2="55.80" stroke="#8a8a8a" stroke-width="0.45" />
<line x1="533.02" y1="54.20" x2="533.02" y2="55.80" stroke="#8a8a8a" stroke-width="0.45" />
<line x1="535.62" y1="54.80" x2="535.62" y2="55.80" stroke="#8a8a8a" stroke-width="0.45" />
<line x1="538.22" y1="54.20" x2="538.22" y2="55.80" stroke="#8a8a8a" stroke-width="0.45" />
<line x1="540.82" y1="54.80" x2="540.82" y2="55.80" stroke="#8a8a8a" stroke-width="0.45" />
<line x1="543.42" y1="54.20" x2="543.42" y2="55.80" stroke="#8a8a8a" stroke-width="0.45" />
<line x1="546.02" y1="54.80" x2="546.02" y2="55.80" stroke="#8a8a8a" stroke-width="0.45" />
<line x1="551.23" y1="54.80" x2="551.23" y2="55.80" stroke="#8a8a8a" stroke-width="0.45" />
<line x1="553.83" y1="54.20" x2="553.83" y2="55.80" stroke="#8a8a8a" stroke-width="0.45" />
<line x1="556.43" y1="54.80" x2="556.43" y2="55.80" stroke="#8a8a8a" stroke-width="0.45" />
<line x1="559.03" y1="54.20" x2="559.03" y2="55.80" stroke="#8a8a8a" stroke-width="0.45" />
<line x1="561.63" y1="54.80" x2="561.63" y2="55.80" stroke="#8a8a8a" stroke-width="0.45" />
<line x1="564.23" y1="54.20" x2="564.23" y2="55.80" stroke="#8a8a8a" stroke-width="0.45" />
<line x1="566.84" y1="54.80" x2="566.84" y2="55.80" stroke="#8a8a8a" stroke-width="0.45" />
<line x1="569.44" y1="54.20" x2="569.44" y2="55.80" stroke="#8a8a8a" stroke-width="0.45" />
<line x1="572.04" y1="54.80" x2="572.04" y2="55.80" stroke="#8a8a8a" stroke-width="0.45" />
<line x1="577.24" y1="54.80" x2="577.24" y2="55.80" stroke="#8a8a8a" stroke-width="0.45" />
<line x1="579.84" y1="54.20" x2="579.84" y2="55.80" stroke="#8a8a8a" stroke-width="0.45" />
<line x1="582.44" y1="54.80" x2="582.44" y2="55.80" stroke="#8a8a8a" stroke-width="0.45" />
<line x1="585.05" y1="54.20" x2="585.05" y2="55.80" stroke="#8a8a8a" stroke-width="0.45" />
<line x1="587.65" y1="54.80" x2="587.65" y2="55.80" stroke="#8a8a8a" stroke-width="0.45" />
<line x1="590.25" y1="54.20" x2="590.25" y2="55.80" stroke="#8a8a8a" stroke-width="0.45" />
<line x1="592.85" y1="54.80" x2="592.85" y2="55.80" stroke="#8a8a8a" stroke-width="0.45" />
<line x1="595.45" y1="54.20" x2="595.45" y2="55.80" stroke="#8a8a8a" stroke-width="0.45" />
<line x1="598.05" y1="54.80" x2="598.05" y2="55.80" stroke="#8a8a8a" stroke-width="0.45" />
<line x1="603.26" y1="54.80" x2="603.26" y2="55.80" stroke="#8a8a8a" stroke-width="0.45" />
<line x1="605.86" y1="54.20" x2="605.86" y2="55.80" stroke="#8a8a8a" stroke-width="0.45" />
<line x1="608.46" y1="54.80" x2="608.46" y2="55.80" stroke="#8a8a8a" stroke-width="0.45" />
<line x1="611.06" y1="54.20" x2="611.06" y2="55.80" stroke="#8a8a8a" stroke-width="0.45" />
<line x1="613.66" y1="54.80" x2="613.66" y2="55.80" stroke="#8a8a8a" stroke-width="0.45" />
<line x1="616.26" y1="54.20" x2="616.26" y2="55.80" stroke="#8a8a8a" stroke-width="0.45" />
<line x1="618.87" y1="54.80" x2="618.87" y2="55.80" stroke="#8a8a8a" stroke-width="0.45" />
</g>
<clipPath id="vr"><rect x="23.2" y="55.8" width="8.8" height="418.2"/></clipPath><g clip-path="url(#vr)">
<line x1="23.80" y1="56.97" x2="32.00" y2="56.97" stroke="#8a8a8a" stroke-width="0.55" />
<text x="26.40" y="61.33" font-size="4.6" fill="#9a9a9a" stroke="none" textLength="2.20" lengthAdjust="spacingAndGlyphs" transform="rotate(0.05 26.4 61.3)">1</text>
<text x="26.40" y="66.33" font-size="4.6" fill="#9a9a9a" stroke="none" textLength="2.20" lengthAdjust="spacingAndGlyphs" transform="rotate(0.05 26.4 66.3)">0</text>
<text x="26.40" y="71.33" font-size="4.6" fill="#9a9a9a" stroke="none" textLength="2.20" lengthAdjust="spacingAndGlyphs" transform="rotate(0.05 26.4 71.3)">0</text>
<line x1="23.80" y1="82.98" x2="32.00" y2="82.98" stroke="#8a8a8a" stroke-width="0.55" />
<text x="26.40" y="87.34" font-size="4.6" fill="#9a9a9a" stroke="none" textLength="2.20" lengthAdjust="spacingAndGlyphs" transform="rotate(0.05 26.4 87.3)">5</text>
<text x="26.40" y="92.34" font-size="4.6" fill="#9a9a9a" stroke="none" textLength="2.20" lengthAdjust="spacingAndGlyphs" transform="rotate(0.05 26.4 92.3)">0</text>
<line x1="23.80" y1="109.00" x2="32.00" y2="109.00" stroke="#8a8a8a" stroke-width="0.55" />
<text x="26.40" y="113.36" font-size="4.6" fill="#9a9a9a" stroke="none" textLength="2.20" lengthAdjust="spacingAndGlyphs" transform="rotate(0.05 26.4 113.4)">0</text>
<line x1="23.80" y1="135.01" x2="32.00" y2="135.01" stroke="#8a8a8a" stroke-width="0.55" />
<text x="26.40" y="139.37" font-size="4.6" fill="#9a9a9a" stroke="none" textLength="2.20" lengthAdjust="spacingAndGlyphs" transform="rotate(0.05 26.4 139.4)">5</text>
<text x="26.40" y="144.37" font-size="4.6" fill="#9a9a9a" stroke="none" textLength="2.20" lengthAdjust="spacingAndGlyphs" transform="rotate(0.05 26.4 144.4)">0</text>
<line x1="23.80" y1="161.03" x2="32.00" y2="161.03" stroke="#8a8a8a" stroke-width="0.55" />
<text x="26.40" y="165.39" font-size="4.6" fill="#9a9a9a" stroke="none" textLength="2.20" lengthAdjust="spacingAndGlyphs" transform="rotate(0.05 26.4 165.4)">1</text>
<text x="26.40" y="170.39" font-size="4.6" fill="#9a9a9a" stroke="none" textLength="2.20" lengthAdjust="spacingAndGlyphs" transform="rotate(0.05 26.4 170.4)">0</text>
<text x="26.40" y="175.39" font-size="4.6" fill="#9a9a9a" stroke="none" textLength="2.20" lengthAdjust="spacingAndGlyphs" transform="rotate(0.05 26.4 175.4)">0</text>
<line x1="23.80" y1="187.05" x2="32.00" y2="187.05" stroke="#8a8a8a" stroke-width="0.55" />
<text x="26.40" y="191.40" font-size="4.6" fill="#9a9a9a" stroke="none" textLength="2.20" lengthAdjust="spacingAndGlyphs" transform="rotate(0.05 26.4 191.4)">1</text>
<text x="26.40" y="196.40" font-size="4.6" fill="#9a9a9a" stroke="none" textLength="2.20" lengthAdjust="spacingAndGlyphs" transform="rotate(0.05 26.4 196.4)">5</text>
<text x="26.40" y="201.40" font-size="4.6" fill="#9a9a9a" stroke="none" textLength="2.20" lengthAdjust="spacingAndGlyphs" transform="rotate(0.05 26.4 201.4)">0</text>
<line x1="23.80" y1="213.06" x2="32.00" y2="213.06" stroke="#8a8a8a" stroke-width="0.55" />
<text x="26.40" y="217.42" font-size="4.6" fill="#9a9a9a" stroke="none" textLength="2.20" lengthAdjust="spacingAndGlyphs" transform="rotate(0.05 26.4 217.4)">2</text>
<text x="26.40" y="222.42" font-size="4.6" fill="#9a9a9a" stroke="none" textLength="2.20" lengthAdjust="spacingAndGlyphs" transform="rotate(0.05 26.4 222.4)">0</text>
<text x="26.40" y="227.42" font-size="4.6" fill="#9a9a9a" stroke="none" textLength="2.20" lengthAdjust="spacingAndGlyphs" transform="rotate(0.05 26.4 227.4)">0</text>
<line x1="23.80" y1="239.07" x2="32.00" y2="239.07" stroke="#8a8a8a" stroke-width="0.55" />
<text x="26.40" y="243.43" font-size="4.6" fill="#9a9a9a" stroke="none" textLength="2.20" lengthAdjust="spacingAndGlyphs" transform="rotate(0.05 26.4 243.4)">2</text>
<text x="26.40" y="248.43" font-size="4.6" fill="#9a9a9a" stroke="none" textLength="2.20" lengthAdjust="spacingAndGlyphs" transform="rotate(0.05 26.4 248.4)">5</text>
<text x="26.40" y="253.43" font-size="4.6" fill="#9a9a9a" stroke="none" textLength="2.20" lengthAdjust="spacingAndGlyphs" transform="rotate(0.05 26.4 253.4)">0</text>
<line x1="23.80" y1="265.09" x2="32.00" y2="265.09" stroke="#8a8a8a" stroke-width="0.55" />
<text x="26.40" y="269.45" font-size="4.6" fill="#9a9a9a" stroke="none" textLength="2.20" lengthAdjust="spacingAndGlyphs" transform="rotate(0.05 26.4 269.4)">3</text>
<text x="26.40" y="274.45" font-size="4.6" fill="#9a9a9a" stroke="none" textLength="2.20" lengthAdjust="spacingAndGlyphs" transform="rotate(0.05 26.4 274.4)">0</text>
<text x="26.40" y="279.45" font-size="4.6" fill="#9a9a9a" stroke="none" textLength="2.20" lengthAdjust="spacingAndGlyphs" transform="rotate(0.05 26.4 279.4)">0</text>
<line x1="23.80" y1="291.11" x2="32.00" y2="291.11" stroke="#8a8a8a" stroke-width="0.55" />
<text x="26.40" y="295.46" font-size="4.6" fill="#9a9a9a" stroke="none" textLength="2.20" lengthAdjust="spacingAndGlyphs" transform="rotate(0.05 26.4 295.5)">3</text>
<text x="26.40" y="300.46" font-size="4.6" fill="#9a9a9a" stroke="none" textLength="2.20" lengthAdjust="spacingAndGlyphs" transform="rotate(0.05 26.4 300.5)">5</text>
<text x="26.40" y="305.46" font-size="4.6" fill="#9a9a9a" stroke="none" textLength="2.20" lengthAdjust="spacingAndGlyphs" transform="rotate(0.05 26.4 305.5)">0</text>
<line x1="23.80" y1="317.12" x2="32.00" y2="317.12" stroke="#8a8a8a" stroke-width="0.55" />
<text x="26.40" y="321.48" font-size="4.6" fill="#9a9a9a" stroke="none" textLength="2.20" lengthAdjust="spacingAndGlyphs" transform="rotate(0.05 26.4 321.5)">4</text>
<text x="26.40" y="326.48" font-size="4.6" fill="#9a9a9a" stroke="none" textLength="2.20" lengthAdjust="spacingAndGlyphs" transform="rotate(0.05 26.4 326.5)">0</text>
<text x="26.40" y="331.48" font-size="4.6" fill="#9a9a9a" stroke="none" textLength="2.20" lengthAdjust="spacingAndGlyphs" transform="rotate(0.05 26.4 331.5)">0</text>
<line x1="23.80" y1="343.13" x2="32.00" y2="343.13" stroke="#8a8a8a" stroke-width="0.55" />
<text x="26.40" y="347.49" font-size="4.6" fill="#9a9a9a" stroke="none" textLength="2.20" lengthAdjust="spacingAndGlyphs" transform="rotate(0.05 26.4 347.5)">4</text>
<text x="26.40" y="352.49" font-size="4.6" fill="#9a9a9a" stroke="none" textLength="2.20" lengthAdjust="spacingAndGlyphs" transform="rotate(0.05 26.4 352.5)">5</text>
<text x="26.40" y="357.49" font-size="4.6" fill="#9a9a9a" stroke="none" textLength="2.20" lengthAdjust="spacingAndGlyphs" transform="rotate(0.05 26.4 357.5)">0</text>
<line x1="23.80" y1="369.15" x2="32.00" y2="369.15" stroke="#8a8a8a" stroke-width="0.55" />
<text x="26.40" y="373.51" font-size="4.6" fill="#9a9a9a" stroke="none" textLength="2.20" lengthAdjust="spacingAndGlyphs" transform="rotate(0.05 26.4 373.5)">5</text>
<text x="26.40" y="378.51" font-size="4.6" fill="#9a9a9a" stroke="none" textLength="2.20" lengthAdjust="spacingAndGlyphs" transform="rotate(0.05 26.4 378.5)">0</text>
<text x="26.40" y="383.51" font-size="4.6" fill="#9a9a9a" stroke="none" textLength="2.20" lengthAdjust="spacingAndGlyphs" transform="rotate(0.05 26.4 383.5)">0</text>
<line x1="23.80" y1="395.16" x2="32.00" y2="395.16" stroke="#8a8a8a" stroke-width="0.55" />
<text x="26.40" y="399.52" font-size="4.6" fill="#9a9a9a" stroke="none" textLength="2.20" lengthAdjust="spacingAndGlyphs" transform="rotate(0.05 26.4 399.5)">5</text>
<text x="26.40" y="404.52" font-size="4.6" fill="#9a9a9a" stroke="none" textLength="2.20" lengthAdjust="spacingAndGlyphs" transform="rotate(0.05 26.4 404.5)">5</text>
<text x="26.40" y="409.52" font-size="4.6" fill="#9a9a9a" stroke="none" textLength="2.20" lengthAdjust="spacingAndGlyphs" transform="rotate(0.05 26.4 409.5)">0</text>
<line x1="23.80" y1="421.18" x2="32.00" y2="421.18" stroke="#8a8a8a" stroke-width="0.55" />
<text x="26.40" y="425.54" font-size="4.6" fill="#9a9a9a" stroke="none" textLength="2.20" lengthAdjust="spacingAndGlyphs" transform="rotate(0.05 26.4 425.5)">6</text>
<text x="26.40" y="430.54" font-size="4.6" fill="#9a9a9a" stroke="none" textLength="2.20" lengthAdjust="spacingAndGlyphs" transform="rotate(0.05 26.4 430.5)">0</text>
<text x="26.40" y="435.54" font-size="4.6" fill="#9a9a9a" stroke="none" textLength="2.20" lengthAdjust="spacingAndGlyphs" transform="rotate(0.05 26.4 435.5)">0</text>
<line x1="23.80" y1="447.19" x2="32.00" y2="447.19" stroke="#8a8a8a" stroke-width="0.55" />
<text x="26.40" y="451.55" font-size="4.6" fill="#9a9a9a" stroke="none" textLength="2.20" lengthAdjust="spacingAndGlyphs" transform="rotate(0.05 26.4 451.6)">6</text>
<text x="26.40" y="456.55" font-size="4.6" fill="#9a9a9a" stroke="none" textLength="2.20" lengthAdjust="spacingAndGlyphs" transform="rotate(0.05 26.4 456.6)">5</text>
<text x="26.40" y="461.55" font-size="4.6" fill="#9a9a9a" stroke="none" textLength="2.20" lengthAdjust="spacingAndGlyphs" transform="rotate(0.05 26.4 461.6)">0</text>
<line x1="23.80" y1="473.21" x2="32.00" y2="473.21" stroke="#8a8a8a" stroke-width="0.55" />
<text x="26.40" y="477.57" font-size="4.6" fill="#9a9a9a" stroke="none" textLength="2.20" lengthAdjust="spacingAndGlyphs" transform="rotate(0.05 26.4 477.6)">7</text>
<text x="26.40" y="482.57" font-size="4.6" fill="#9a9a9a" stroke="none" textLength="2.20" lengthAdjust="spacingAndGlyphs" transform="rotate(0.05 26.4 482.6)">0</text>
<text x="26.40" y="487.57" font-size="4.6" fill="#9a9a9a" stroke="none" textLength="2.20" lengthAdjust="spacingAndGlyphs" transform="rotate(0.05 26.4 487.6)">0</text>
<line x1="31.00" y1="59.57" x2="32.00" y2="59.57" stroke="#8a8a8a" stroke-width="0.45" />
<line x1="30.40" y1="62.17" x2="32.00" y2="62.17" stroke="#8a8a8a" stroke-width="0.45" />
<line x1="31.00" y1="64.77" x2="32.00" y2="64.77" stroke="#8a8a8a" stroke-width="0.45" />
<line x1="30.40" y1="67.38" x2="32.00" y2="67.38" stroke="#8a8a8a" stroke-width="0.45" />
<line x1="31.00" y1="69.98" x2="32.00" y2="69.98" stroke="#8a8a8a" stroke-width="0.45" />
<line x1="30.40" y1="72.58" x2="32.00" y2="72.58" stroke="#8a8a8a" stroke-width="0.45" />
<line x1="31.00" y1="75.18" x2="32.00" y2="75.18" stroke="#8a8a8a" stroke-width="0.45" />
<line x1="30.40" y1="77.78" x2="32.00" y2="77.78" stroke="#8a8a8a" stroke-width="0.45" />
<line x1="31.00" y1="80.38" x2="32.00" y2="80.38" stroke="#8a8a8a" stroke-width="0.45" />
<line x1="31.00" y1="85.59" x2="32.00" y2="85.59" stroke="#8a8a8a" stroke-width="0.45" />
<line x1="30.40" y1="88.19" x2="32.00" y2="88.19" stroke="#8a8a8a" stroke-width="0.45" />
<line x1="31.00" y1="90.79" x2="32.00" y2="90.79" stroke="#8a8a8a" stroke-width="0.45" />
<line x1="30.40" y1="93.39" x2="32.00" y2="93.39" stroke="#8a8a8a" stroke-width="0.45" />
<line x1="31.00" y1="95.99" x2="32.00" y2="95.99" stroke="#8a8a8a" stroke-width="0.45" />
<line x1="30.40" y1="98.59" x2="32.00" y2="98.59" stroke="#8a8a8a" stroke-width="0.45" />
<line x1="31.00" y1="101.20" x2="32.00" y2="101.20" stroke="#8a8a8a" stroke-width="0.45" />
<line x1="30.40" y1="103.80" x2="32.00" y2="103.80" stroke="#8a8a8a" stroke-width="0.45" />
<line x1="31.00" y1="106.40" x2="32.00" y2="106.40" stroke="#8a8a8a" stroke-width="0.45" />
<line x1="31.00" y1="111.60" x2="32.00" y2="111.60" stroke="#8a8a8a" stroke-width="0.45" />
<line x1="30.40" y1="114.20" x2="32.00" y2="114.20" stroke="#8a8a8a" stroke-width="0.45" />
<line x1="31.00" y1="116.80" x2="32.00" y2="116.80" stroke="#8a8a8a" stroke-width="0.45" />
<line x1="30.40" y1="119.41" x2="32.00" y2="119.41" stroke="#8a8a8a" stroke-width="0.45" />
<line x1="31.00" y1="122.01" x2="32.00" y2="122.01" stroke="#8a8a8a" stroke-width="0.45" />
<line x1="30.40" y1="124.61" x2="32.00" y2="124.61" stroke="#8a8a8a" stroke-width="0.45" />
<line x1="31.00" y1="127.21" x2="32.00" y2="127.21" stroke="#8a8a8a" stroke-width="0.45" />
<line x1="30.40" y1="129.81" x2="32.00" y2="129.81" stroke="#8a8a8a" stroke-width="0.45" />
<line x1="31.00" y1="132.41" x2="32.00" y2="132.41" stroke="#8a8a8a" stroke-width="0.45" />
<line x1="31.00" y1="137.62" x2="32.00" y2="137.62" stroke="#8a8a8a" stroke-width="0.45" />
<line x1="30.40" y1="140.22" x2="32.00" y2="140.22" stroke="#8a8a8a" stroke-width="0.45" />
<line x1="31.00" y1="142.82" x2="32.00" y2="142.82" stroke="#8a8a8a" stroke-width="0.45" />
<line x1="30.40" y1="145.42" x2="32.00" y2="145.42" stroke="#8a8a8a" stroke-width="0.45" />
<line x1="31.00" y1="148.02" x2="32.00" y2="148.02" stroke="#8a8a8a" stroke-width="0.45" />
<line x1="30.40" y1="150.62" x2="32.00" y2="150.62" stroke="#8a8a8a" stroke-width="0.45" />
<line x1="31.00" y1="153.23" x2="32.00" y2="153.23" stroke="#8a8a8a" stroke-width="0.45" />
<line x1="30.40" y1="155.83" x2="32.00" y2="155.83" stroke="#8a8a8a" stroke-width="0.45" />
<line x1="31.00" y1="158.43" x2="32.00" y2="158.43" stroke="#8a8a8a" stroke-width="0.45" />
<line x1="31.00" y1="163.63" x2="32.00" y2="163.63" stroke="#8a8a8a" stroke-width="0.45" />
<line x1="30.40" y1="166.23" x2="32.00" y2="166.23" stroke="#8a8a8a" stroke-width="0.45" />
<line x1="31.00" y1="168.83" x2="32.00" y2="168.83" stroke="#8a8a8a" stroke-width="0.45" />
<line x1="30.40" y1="171.44" x2="32.00" y2="171.44" stroke="#8a8a8a" stroke-width="0.45" />
<line x1="31.00" y1="174.04" x2="32.00" y2="174.04" stroke="#8a8a8a" stroke-width="0.45" />
<line x1="30.40" y1="176.64" x2="32.00" y2="176.64" stroke="#8a8a8a" stroke-width="0.45" />
<line x1="31.00" y1="179.24" x2="32.00" y2="179.24" stroke="#8a8a8a" stroke-width="0.45" />
<line x1="30.40" y1="181.84" x2="32.00" y2="181.84" stroke="#8a8a8a" stroke-width="0.45" />
<line x1="31.00" y1="184.44" x2="32.00" y2="184.44" stroke="#8a8a8a" stroke-width="0.45" />
<line x1="31.00" y1="189.65" x2="32.00" y2="189.65" stroke="#8a8a8a" stroke-width="0.45" />
<line x1="30.40" y1="192.25" x2="32.00" y2="192.25" stroke="#8a8a8a" stroke-width="0.45" />
<line x1="31.00" y1="194.85" x2="32.00" y2="194.85" stroke="#8a8a8a" stroke-width="0.45" />
<line x1="30.40" y1="197.45" x2="32.00" y2="197.45" stroke="#8a8a8a" stroke-width="0.45" />
<line x1="31.00" y1="200.05" x2="32.00" y2="200.05" stroke="#8a8a8a" stroke-width="0.45" />
<line x1="30.40" y1="202.65" x2="32.00" y2="202.65" stroke="#8a8a8a" stroke-width="0.45" />
<line x1="31.00" y1="205.26" x2="32.00" y2="205.26" stroke="#8a8a8a" stroke-width="0.45" />
<line x1="30.40" y1="207.86" x2="32.00" y2="207.86" stroke="#8a8a8a" stroke-width="0.45" />
<line x1="31.00" y1="210.46" x2="32.00" y2="210.46" stroke="#8a8a8a" stroke-width="0.45" />
<line x1="31.00" y1="215.66" x2="32.00" y2="215.66" stroke="#8a8a8a" stroke-width="0.45" />
<line x1="30.40" y1="218.26" x2="32.00" y2="218.26" stroke="#8a8a8a" stroke-width="0.45" />
<line x1="31.00" y1="220.86" x2="32.00" y2="220.86" stroke="#8a8a8a" stroke-width="0.45" />
<line x1="30.40" y1="223.47" x2="32.00" y2="223.47" stroke="#8a8a8a" stroke-width="0.45" />
<line x1="31.00" y1="226.07" x2="32.00" y2="226.07" stroke="#8a8a8a" stroke-width="0.45" />
<line x1="30.40" y1="228.67" x2="32.00" y2="228.67" stroke="#8a8a8a" stroke-width="0.45" />
<line x1="31.00" y1="231.27" x2="32.00" y2="231.27" stroke="#8a8a8a" stroke-width="0.45" />
<line x1="30.40" y1="233.87" x2="32.00" y2="233.87" stroke="#8a8a8a" stroke-width="0.45" />
<line x1="31.00" y1="236.47" x2="32.00" y2="236.47" stroke="#8a8a8a" stroke-width="0.45" />
<line x1="31.00" y1="241.68" x2="32.00" y2="241.68" stroke="#8a8a8a" stroke-width="0.45" />
<line x1="30.40" y1="244.28" x2="32.00" y2="244.28" stroke="#8a8a8a" stroke-width="0.45" />
<line x1="31.00" y1="246.88" x2="32.00" y2="246.88" stroke="#8a8a8a" stroke-width="0.45" />
<line x1="30.40" y1="249.48" x2="32.00" y2="249.48" stroke="#8a8a8a" stroke-width="0.45" />
<line x1="31.00" y1="252.08" x2="32.00" y2="252.08" stroke="#8a8a8a" stroke-width="0.45" />
<line x1="30.40" y1="254.68" x2="32.00" y2="254.68" stroke="#8a8a8a" stroke-width="0.45" />
<line x1="31.00" y1="257.29" x2="32.00" y2="257.29" stroke="#8a8a8a" stroke-width="0.45" />
<line x1="30.40" y1="259.89" x2="32.00" y2="259.89" stroke="#8a8a8a" stroke-width="0.45" />
<line x1="31.00" y1="262.49" x2="32.00" y2="262.49" stroke="#8a8a8a" stroke-width="0.45" />
<line x1="31.00" y1="267.69" x2="32.00" y2="267.69" stroke="#8a8a8a" stroke-width="0.45" />
<line x1="30.40" y1="270.29" x2="32.00" y2="270.29" stroke="#8a8a8a" stroke-width="0.45" />
<line x1="31.00" y1="272.89" x2="32.00" y2="272.89" stroke="#8a8a8a" stroke-width="0.45" />
<line x1="30.40" y1="275.50" x2="32.00" y2="275.50" stroke="#8a8a8a" stroke-width="0.45" />
<line x1="31.00" y1="278.10" x2="32.00" y2="278.10" stroke="#8a8a8a" stroke-width="0.45" />
<line x1="30.40" y1="280.70" x2="32.00" y2="280.70" stroke="#8a8a8a" stroke-width="0.45" />
<line x1="31.00" y1="283.30" x2="32.00" y2="283.30" stroke="#8a8a8a" stroke-width="0.45" />
<line x1="30.40" y1="285.90" x2="32.00" y2="285.90" stroke="#8a8a8a" stroke-width="0.45" />
<line x1="31.00" y1="288.50" x2="32.00" y2="288.50" stroke="#8a8a8a" stroke-width="0.45" />
<line x1="31.00" y1="293.71" x2="32.00" y2="293.71" stroke="#8a8a8a" stroke-width="0.45" />
<line x1="30.40" y1="296.31" x2="32.00" y2="296.31" stroke="#8a8a8a" stroke-width="0.45" />
<line x1="31.00" y1="298.91" x2="32.00" y2="298.91" stroke="#8a8a8a" stroke-width="0.45" />
<line x1="30.40" y1="301.51" x2="32.00" y2="301.51" stroke="#8a8a8a" stroke-width="0.45" />
<line x1="31.00" y1="304.11" x2="32.00" y2="304.11" stroke="#8a8a8a" stroke-width="0.45" />
<line x1="30.40" y1="306.71" x2="32.00" y2="306.71" stroke="#8a8a8a" stroke-width="0.45" />
<line x1="31.00" y1="309.32" x2="32.00" y2="309.32" stroke="#8a8a8a" stroke-width="0.45" />
<line x1="30.40" y1="311.92" x2="32.00" y2="311.92" stroke="#8a8a8a" stroke-width="0.45" />
<line x1="31.00" y1="314.52" x2="32.00" y2="314.52" stroke="#8a8a8a" stroke-width="0.45" />
<line x1="31.00" y1="319.72" x2="32.00" y2="319.72" stroke="#8a8a8a" stroke-width="0.45" />
<line x1="30.40" y1="322.32" x2="32.00" y2="322.32" stroke="#8a8a8a" stroke-width="0.45" />
<line x1="31.00" y1="324.92" x2="32.00" y2="324.92" stroke="#8a8a8a" stroke-width="0.45" />
<line x1="30.40" y1="327.53" x2="32.00" y2="327.53" stroke="#8a8a8a" stroke-width="0.45" />
<line x1="31.00" y1="330.13" x2="32.00" y2="330.13" stroke="#8a8a8a" stroke-width="0.45" />
<line x1="30.40" y1="332.73" x2="32.00" y2="332.73" stroke="#8a8a8a" stroke-width="0.45" />
<line x1="31.00" y1="335.33" x2="32.00" y2="335.33" stroke="#8a8a8a" stroke-width="0.45" />
<line x1="30.40" y1="337.93" x2="32.00" y2="337.93" stroke="#8a8a8a" stroke-width="0.45" />
<line x1="31.00" y1="340.53" x2="32.00" y2="340.53" stroke="#8a8a8a" stroke-width="0.45" />
<line x1="31.00" y1="345.74" x2="32.00" y2="345.74" stroke="#8a8a8a" stroke-width="0.45" />
<line x1="30.40" y1="348.34" x2="32.00" y2="348.34" stroke="#8a8a8a" stroke-width="0.45" />
<line x1="31.00" y1="350.94" x2="32.00" y2="350.94" stroke="#8a8a8a" stroke-width="0.45" />
<line x1="30.40" y1="353.54" x2="32.00" y2="353.54" stroke="#8a8a8a" stroke-width="0.45" />
<line x1="31.00" y1="356.14" x2="32.00" y2="356.14" stroke="#8a8a8a" stroke-width="0.45" />
<line x1="30.40" y1="358.74" x2="32.00" y2="358.74" stroke="#8a8a8a" stroke-width="0.45" />
<line x1="31.00" y1="361.35" x2="32.00" y2="361.35" stroke="#8a8a8a" stroke-width="0.45" />
<line x1="30.40" y1="363.95" x2="32.00" y2="363.95" stroke="#8a8a8a" stroke-width="0.45" />
<line x1="31.00" y1="366.55" x2="32.00" y2="366.55" stroke="#8a8a8a" stroke-width="0.45" />
<line x1="31.00" y1="371.75" x2="32.00" y2="371.75" stroke="#8a8a8a" stroke-width="0.45" />
<line x1="30.40" y1="374.35" x2="32.00" y2="374.35" stroke="#8a8a8a" stroke-width="0.45" />
<line x1="31.00" y1="376.95" x2="32.00" y2="376.95" stroke="#8a8a8a" stroke-width="0.45" />
<line x1="30.40" y1="379.56" x2="32.00" y2="379.56" stroke="#8a8a8a" stroke-width="0.45" />
<line x1="31.00" y1="382.16" x2="32.00" y2="382.16" stroke="#8a8a8a" stroke-width="0.45" />
<line x1="30.40" y1="384.76" x2="32.00" y2="384.76" stroke="#8a8a8a" stroke-width="0.45" />
<line x1="31.00" y1="387.36" x2="32.00" y2="387.36" stroke="#8a8a8a" stroke-width="0.45" />
<line x1="30.40" y1="389.96" x2="32.00" y2="389.96" stroke="#8a8a8a" stroke-width="0.45" />
<line x1="31.00" y1="392.56" x2="32.00" y2="392.56" stroke="#8a8a8a" stroke-width="0.45" />
<line x1="31.00" y1="397.77" x2="32.00" y2="397.77" stroke="#8a8a8a" stroke-width="0.45" />
<line x1="30.40" y1="400.37" x2="32.00" y2="400.37" stroke="#8a8a8a" stroke-width="0.45" />
<line x1="31.00" y1="402.97" x2="32.00" y2="402.97" stroke="#8a8a8a" stroke-width="0.45" />
<line x1="30.40" y1="405.57" x2="32.00" y2="405.57" stroke="#8a8a8a" stroke-width="0.45" />
<line x1="31.00" y1="408.17" x2="32.00" y2="408.17" stroke="#8a8a8a" stroke-width="0.45" />
<line x1="30.40" y1="410.77" x2="32.00" y2="410.77" stroke="#8a8a8a" stroke-width="0.45" />
<line x1="31.00" y1="413.38" x2="32.00" y2="413.38" stroke="#8a8a8a" stroke-width="0.45" />
<line x1="30.40" y1="415.98" x2="32.00" y2="415.98" stroke="#8a8a8a" stroke-width="0.45" />
<line x1="31.00" y1="418.58" x2="32.00" y2="418.58" stroke="#8a8a8a" stroke-width="0.45" />
<line x1="31.00" y1="423.78" x2="32.00" y2="423.78" stroke="#8a8a8a" stroke-width="0.45" />
<line x1="30.40" y1="426.38" x2="32.00" y2="426.38" stroke="#8a8a8a" stroke-width="0.45" />
<line x1="31.00" y1="428.98" x2="32.00" y2="428.98" stroke="#8a8a8a" stroke-width="0.45" />
<line x1="30.40" y1="431.59" x2="32.00" y2="431.59" stroke="#8a8a8a" stroke-width="0.45" />
<line x1="31.00" y1="434.19" x2="32.00" y2="434.19" stroke="#8a8a8a" stroke-width="0.45" />
<line x1="30.40" y1="436.79" x2="32.00" y2="436.79" stroke="#8a8a8a" stroke-width="0.45" />
<line x1="31.00" y1="439.39" x2="32.00" y2="439.39" stroke="#8a8a8a" stroke-width="0.45" />
<line x1="30.40" y1="441.99" x2="32.00" y2="441.99" stroke="#8a8a8a" stroke-width="0.45" />
<line x1="31.00" y1="444.59" x2="32.00" y2="444.59" stroke="#8a8a8a" stroke-width="0.45" />
<line x1="31.00" y1="449.80" x2="32.00" y2="449.80" stroke="#8a8a8a" stroke-width="0.45" />
<line x1="30.40" y1="452.40" x2="32.00" y2="452.40" stroke="#8a8a8a" stroke-width="0.45" />
<line x1="31.00" y1="455.00" x2="32.00" y2="455.00" stroke="#8a8a8a" stroke-width="0.45" />
<line x1="30.40" y1="457.60" x2="32.00" y2="457.60" stroke="#8a8a8a" stroke-width="0.45" />
<line x1="31.00" y1="460.20" x2="32.00" y2="460.20" stroke="#8a8a8a" stroke-width="0.45" />
<line x1="30.40" y1="462.80" x2="32.00" y2="462.80" stroke="#8a8a8a" stroke-width="0.45" />
<line x1="31.00" y1="465.41" x2="32.00" y2="465.41" stroke="#8a8a8a" stroke-width="0.45" />
<line x1="30.40" y1="468.01" x2="32.00" y2="468.01" stroke="#8a8a8a" stroke-width="0.45" />
<line x1="31.00" y1="470.61" x2="32.00" y2="470.61" stroke="#8a8a8a" stroke-width="0.45" />
</g></g>
<line x1="500.30" y1="48.10" x2="500.30" y2="55.80" stroke="#e0e0e0" stroke-width="0.7" />
<line x1="23.70" y1="138.30" x2="32.00" y2="138.30" stroke="#e0e0e0" stroke-width="0.7" />
<line x1="27.40" y1="136.60" x2="27.40" y2="140.00" stroke="#e0e0e0" stroke-width="0.6" />
<path d="M623 53.2 L625.2 51 L627.4 53.2" fill="none" stroke="#8a8a8a" stroke-width="0.7" />
<path d="M623 468.2 L625.2 470.4 L627.4 468.2" fill="none" stroke="#8a8a8a" stroke-width="0.7" />
<path d="M614.8 476.6 L616.6 478.4 L614.8 480.2" fill="none" stroke="#8a8a8a" stroke-width="0.7" />
<path d="M149.4 476.6 L147.6 478.4 L149.4 480.2" fill="none" stroke="#8a8a8a" stroke-width="0.7" />
<path d="M137.8 476.2 L140 478.4 L137.8 480.6" fill="none" stroke="#c8c8c8" stroke-width="0.7" />
<text x="28.60" y="480.72" font-size="5.6" fill="#e4e4e4" stroke="#e4e4e4" textLength="12.60" lengthAdjust="spacingAndGlyphs" transform="rotate(0.05 28.6 480.7)">100%</text>
<text x="64.20" y="480.72" font-size="5.6" fill="#d6d6d6" stroke="#d6d6d6" textLength="55.20" lengthAdjust="spacingAndGlyphs" transform="rotate(0.05 64.2 480.7)">646 px x 600 px (72 ppi)</text>
<rect x="241.25" y="176.60" width="189.39" height="158.00" fill="none" stroke="#ffffff" stroke-width="0.9" rx="0" />
<rect x="241.25" y="176.60" width="189.39" height="158.00" fill="none" stroke="#2e2e2e" stroke-width="0.9" rx="0" stroke-dasharray="2.1 2.1"/>
<rect x="157.70" y="108.70" width="336.71" height="312.78" fill="none" stroke="#141414" stroke-width="0.6" rx="0" />
<g id="fill-dialog">
<defs><filter id="sh" x="-10%" y="-10%" width="120%" height="120%"><feGaussianBlur stdDeviation="2.2"/></filter></defs>
<rect x="374.60" y="111.10" width="183.90" height="155.00" fill="#000" stroke="none" stroke-width="1" rx="1.5" opacity="0.45" filter="url(#sh)"/>
<rect x="375.60" y="110.60" width="181.40" height="153.00" fill="#535353" stroke="none" stroke-width="1" rx="0" />
<rect x="376.00" y="111.00" width="180.60" height="152.20" fill="none" stroke="#5e5e5e" stroke-width="0.6" rx="0" />
<rect x="375.60" y="110.60" width="181.40" height="16.40" fill="#ffffff" stroke="none" stroke-width="1" rx="0" />
<text x="380.00" y="120.92" font-size="7.0" fill="#1a1a1a" stroke="#1a1a1a" textLength="8.00" lengthAdjust="spacingAndGlyphs" transform="rotate(0.05 380.0 120.9)">Fill</text>
<path d="M546.2 115.5 L551.8 121.2 M551.8 115.5 L546.2 121.2" fill="none" stroke="#1a1a1a" stroke-width="0.8" />
<text x="406.50" y="138.98" font-size="6.6" fill="#e4e4e4" stroke="#e4e4e4" textLength="28.00" lengthAdjust="spacingAndGlyphs" transform="rotate(0.05 406.5 139.0)">Contents:</text>
<rect x="402.70" y="129.40" width="34.80" height="13.50" fill="none" stroke="#fb0d14" stroke-width="1.6" rx="0" />
<rect x="438.30" y="131.20" width="73.10" height="11.20" fill="#3d3d3d" stroke="#1f6fce" stroke-width="0.9" rx="0.8" />
<text x="441.70" y="139.68" font-size="6.6" fill="#f0f0f0" stroke="#f0f0f0" textLength="42.30" lengthAdjust="spacingAndGlyphs" transform="rotate(0.05 441.7 139.7)">Content-Aware</text>
<path d="M505.6 135.9 L507.5 137.8 L509.4 135.9" fill="none" stroke="#d0d0d0" stroke-width="0.8" />
<rect x="381.60" y="171.60" width="130.20" height="27.80" fill="none" stroke="#616161" stroke-width="0.5" rx="1" />
<rect x="390.00" y="168.00" width="26.50" height="7.00" fill="#535353" stroke="none" stroke-width="1" rx="0" />
<text x="392.00" y="173.68" font-size="6.6" fill="#e0e0e0" stroke="#e0e0e0" textLength="22.50" lengthAdjust="spacingAndGlyphs" transform="rotate(0.05 392.0 173.7)">Options</text>
<rect x="386.30" y="184.40" width="6.30" height="6.30" fill="#efefef" stroke="none" stroke-width="1" rx="1" />
<path d="M387.6 187.5 L389.1 189.1 L391.4 185.8" fill="none" stroke="#222" stroke-width="1" />
<text x="396.00" y="189.98" font-size="6.6" fill="#e4e4e4" stroke="#e4e4e4" textLength="40.00" lengthAdjust="spacingAndGlyphs" transform="rotate(0.05 396.0 190.0)">Color Adaptati</text>
<rect x="381.60" y="205.70" width="130.20" height="52.50" fill="none" stroke="#616161" stroke-width="0.5" rx="1" />
<rect x="390.00" y="202.00" width="29.50" height="7.00" fill="#535353" stroke="none" stroke-width="1" rx="0" />
<text x="392.00" y="207.98" font-size="6.6" fill="#e0e0e0" stroke="#e0e0e0" textLength="25.50" lengthAdjust="spacingAndGlyphs" transform="rotate(0.05 392.0 208.0)">Blending</text>
<text x="415.40" y="220.98" font-size="6.6" fill="#e0e0e0" stroke="#e0e0e0" textLength="17.60" lengthAdjust="spacingAndGlyphs" transform="rotate(0.05 415.4 221.0)">Mode:</text>
<text x="410.00" y="236.18" font-size="6.6" fill="#e0e0e0" stroke="#e0e0e0" textLength="23.00" lengthAdjust="spacingAndGlyphs" transform="rotate(0.05 410.0 236.2)">Opacity:</text>
<rect x="386.40" y="245.60" width="6.20" height="6.20" fill="#484848" stroke="#808080" stroke-width="0.6" rx="1" />
<text x="396.00" y="251.28" font-size="6.6" fill="#e0e0e0" stroke="#e0e0e0" textLength="66.00" lengthAdjust="spacingAndGlyphs" transform="rotate(0.05 396.0 251.3)">Preserve Transparency</text>
<rect x="519.60" y="132.00" width="31.60" height="13.60" fill="#535353" stroke="#c8c8c8" stroke-width="0.9" rx="6.8" />
<text x="530.40" y="141.48" font-size="6.9" fill="#f4f4f4" stroke="#f4f4f4" textLength="9.20" lengthAdjust="spacingAndGlyphs" transform="rotate(0.05 530.4 141.5)">OK</text>
<rect x="519.80" y="151.20" width="31.20" height="11.40" fill="#535353" stroke="#7e7e7e" stroke-width="0.8" rx="5.7" />
<text x="525.30" y="159.38" font-size="6.6" fill="#ececec" stroke="#ececec" textLength="20.50" lengthAdjust="spacingAndGlyphs" transform="rotate(0.05 525.3 159.4)">Cancel</text>
<rect x="437.00" y="142.60" width="75.20" height="98.60" fill="#ffffff" stroke="#156ad0" stroke-width="1.1" rx="0" />
<text x="439.60" y="149.68" font-size="6.6" fill="#222" stroke="#222" textLength="49.20" lengthAdjust="spacingAndGlyphs" transform="rotate(0.05 439.6 149.7)">Foreground Color</text>
<rect x="437.60" y="152.20" width="74.00" height="8.20" fill="#1473e6" stroke="none" stroke-width="1" rx="0" />
<text x="439.60" y="158.88" font-size="6.6" fill="#ffffff" stroke="#ffffff" textLength="49.20" lengthAdjust="spacingAndGlyphs" transform="rotate(0.05 439.6 158.9)">Background Color</text>
<rect x="437.60" y="152.00" width="74.00" height="8.80" fill="none" stroke="#fb0d14" stroke-width="1.5" rx="0" />
<text x="439.80" y="167.98" font-size="6.6" fill="#222" stroke="#222" textLength="19.80" lengthAdjust="spacingAndGlyphs" transform="rotate(0.05 439.8 168.0)">Color...</text>
<line x1="437.50" y1="174.90" x2="511.70" y2="174.90" stroke="#c6c6c6" stroke-width="0.6" />
<text x="439.80" y="185.58" font-size="6.6" fill="#222" stroke="#222" textLength="43.20" lengthAdjust="spacingAndGlyphs" transform="rotate(0.05 439.8 185.6)">Content-Aware</text>
<text x="439.80" y="194.38" font-size="6.6" fill="#222" stroke="#222" textLength="21.70" lengthAdjust="spacingAndGlyphs" transform="rotate(0.05 439.8 194.4)">Pattern</text>
<text x="439.80" y="203.18" font-size="6.6" fill="#9a9a9a" stroke="#9a9a9a" textLength="19.20" lengthAdjust="spacingAndGlyphs" transform="rotate(0.05 439.8 203.2)">History</text>
<line x1="437.50" y1="209.20" x2="511.70" y2="209.20" stroke="#c6c6c6" stroke-width="0.6" />
<text x="439.80" y="220.88" font-size="6.6" fill="#222" stroke="#222" textLength="14.00" lengthAdjust="spacingAndGlyphs" transform="rotate(0.05 439.8 220.9)">Black</text>
<text x="439.80" y="229.78" font-size="6.6" fill="#222" stroke="#222" textLength="28.20" lengthAdjust="spacingAndGlyphs" transform="rotate(0.05 439.8 229.8)">50% Gray</text>
<text x="439.80" y="238.68" font-size="6.6" fill="#222" stroke="#222" textLength="17.70" lengthAdjust="spacingAndGlyphs" transform="rotate(0.05 439.8 238.7)">White</text>
<line x1="484.40" y1="115.60" x2="524.50" y2="134.40" stroke="#fb0d14" stroke-width="1.5" />
<path d="M528.9 136.4 L520.2 136.1 L523.3 129.6 Z" fill="#fb0d14" stroke="none" stroke-width="1" />
</g>
<g id="tools">
<path d="M11.3 48.4 l1.6 1.9 h-1.1 v2.2 h2.2 v-1.1 l1.9 1.6 l-1.9 1.6 v-1.1 h-2.2 v2.2 h1.1 l-1.6 1.9 l-1.6 -1.9 h1.1 v-2.2 h-2.2 v1.1 l-1.9 -1.6 l1.9 -1.6 v1.1 h2.2 v-2.2 h-1.1 Z" fill="#dadada" stroke="none" stroke-width="1" />
<path d="M16.00 58.90 l1.9 0 l0 -1.9 Z" fill="#c0c0c0" stroke="none" stroke-width="1" />
<rect x="7.30" y="63.40" width="8.00" height="6.40" fill="none" stroke="#dadada" stroke-width="0.9" rx="0" stroke-dasharray="1.6 1.1"/>
<path d="M16.00 72.50 l1.9 0 l0 -1.9 Z" fill="#c0c0c0" stroke="none" stroke-width="1" />
<ellipse cx="13" cy="78.4" rx="2.3" ry="1.9" fill="none" stroke="#dadada" stroke-width="1.1"/>
<path d="M6.9 77.2 L11.2 81 L7.6 84.4 M8.4 84.6 L14.4 80.4 M10.2 85 L12.6 81.8" fill="none" stroke="#dadada" stroke-width="0.9" />
<path d="M7 77.2 l2.4 0.4" fill="none" stroke="#dadada" stroke-width="0.8" />
<path d="M16.00 86.20 l1.9 0 l0 -1.9 Z" fill="#c0c0c0" stroke="none" stroke-width="1" />
<rect x="7.40" y="89.70" width="6.00" height="5.90" fill="none" stroke="#9c9c9c" stroke-width="0.7" rx="1.2" />
<rect x="9.00" y="91.20" width="3.20" height="3.20" fill="#f2f2f2" stroke="none" stroke-width="1" rx="0.9" />
<path d="M11.3 92.6 l4.3 3.1 l-1.9 0.3 l1 1.7 l-0.9 0.5 l-1 -1.7 l-1.3 1.3 Z" fill="#f2f2f2" stroke="#535353" stroke-width="0.3" />
<path d="M16.00 99.40 l1.9 0 l0 -1.9 Z" fill="#c0c0c0" stroke="none" stroke-width="1" />
<path d="M8.9 102.60000000000001 v7 h7 M6.700000000000001 104.8 h7 v7" fill="none" stroke="#dadada" stroke-width="1.1" />
<path d="M16.00 113.10 l1.9 0 l0 -1.9 Z" fill="#c0c0c0" stroke="none" stroke-width="1" />
<rect x="7.50" y="117.30" width="7.60" height="7.20" fill="none" stroke="#dadada" stroke-width="0.9" rx="0" />
<path d="M7.500000000000001 117.30000000000001 L15.100000000000001 124.5 M15.100000000000001 117.30000000000001 L7.500000000000001 124.5" fill="none" stroke="#dadada" stroke-width="0.8" />
<rect x="3.20" y="128.80" width="16.40" height="11.60" fill="#383838" stroke="none" stroke-width="1" rx="1" />
<path d="M6.9 139.0 l0.6 -2.2 l4.4 -4.4 l1.6 1.6 l-4.4 4.4 Z" fill="none" stroke="#f0f0f0" stroke-width="0.85" />
<path d="M11.4 131.7 l2.9 2.9 l0.8 -0.8 l-0.9 -0.9 l1.5 -1.5 a1.15 1.15 0 0 0 -1.7 -1.7 l-1.5 1.5 l-0.9 -0.9 Z" fill="#f0f0f0" stroke="none" stroke-width="1" />
<path d="M16.00 140.50 l1.9 0 l0 -1.9 Z" fill="#c0c0c0" stroke="none" stroke-width="1" />
<g transform="rotate(-42 10.9 148.1)"><rect x="5.700000000000001" y="146.3" width="10.4" height="3.7" rx="1.8" fill="#f0f0f0"/><rect x="9.3" y="146.3" width="0.5" height="3.7" fill="#8a8a8a"/><rect x="12.200000000000001" y="146.3" width="0.5" height="3.7" fill="#8a8a8a"/></g>
<path d="M6.700000000000001 147.1 a3.6 3.6 0 0 1 4.4 -3.8" fill="none" stroke="#c8c8c8" stroke-width="0.7" stroke-dasharray="0.9 0.8"/>
<path d="M16.00 153.40 l1.9 0 l0 -1.9 Z" fill="#c0c0c0" stroke="none" stroke-width="1" />
<path d="M15.200000000000001 156.89999999999998 l0.8 0.7 l-4.3 5.4 l-1.5 -1.3 Z" fill="#f0f0f0" stroke="none" stroke-width="1" />
<ellipse cx="8.600000000000001" cy="164.29999999999998" rx="2.5" ry="1.5" fill="#f0f0f0" transform="rotate(-48 8.600000000000001 164.29999999999998)"/>
<path d="M6.700000000000001 166.2 l1.2 -1.6 l0.8 0.8 Z" fill="#f0f0f0" stroke="none" stroke-width="1" />
<path d="M16.00 167.10 l1.9 0 l0 -1.9 Z" fill="#c0c0c0" stroke="none" stroke-width="1" />
<circle cx="11.3" cy="172.6" r="1.75" fill="#dadada"/>
<path d="M10.5 173.9 h1.6 v1.9 h-1.6 Z" fill="#dadada" stroke="none" stroke-width="1" />
<path d="M8.4 175.70000000000002 h5.8 l0.6 2.3 h-7 Z" fill="#dadada" stroke="none" stroke-width="1" />
<rect x="8.00" y="178.40" width="6.60" height="0.80" fill="#a8a8a8" stroke="none" stroke-width="1" rx="0" />
<path d="M16.00 180.80 l1.9 0 l0 -1.9 Z" fill="#c0c0c0" stroke="none" stroke-width="1" />
<path d="M14.8 184.2 l0.8 0.7 l-4.6 5.8 l-1.3 -1.1 Z" fill="#f0f0f0" stroke="none" stroke-width="1" />
<ellipse cx="8.8" cy="191.5" rx="2.1" ry="1.3" fill="#f0f0f0" transform="rotate(-50 8.8 191.5)"/>
<path d="M7.1000000000000005 187.2 q1.2 -1.9 3 -0.7" fill="none" stroke="#dadada" stroke-width="0.8" />
<path d="M6.4 186.1 l0.3 1.6 l1.5 -0.5" fill="none" stroke="#dadada" stroke-width="0.6" />
<line x1="13.10" y1="188.20" x2="15.50" y2="192.00" stroke="#b0b0b0" stroke-width="0.6" stroke-dasharray="0.8 0.7"/>
<path d="M16.00 194.50 l1.9 0 l0 -1.9 Z" fill="#c0c0c0" stroke="none" stroke-width="1" />
<path d="M7.9 203.8 l4.6 -4.6 l2.7 2.2 l-4.4 4.7 Z" fill="none" stroke="#dadada" stroke-width="0.8" />
<path d="M10.600000000000001 201.10000000000002 l1.9 -1.9 l2.7 2.2 l-1.8 2 Z" fill="#dadada" stroke="none" stroke-width="1" />
<line x1="7.70" y1="206.70" x2="14.50" y2="206.70" stroke="#dadada" stroke-width="0.8" />
<path d="M16.00 208.20 l1.9 0 l0 -1.9 Z" fill="#c0c0c0" stroke="none" stroke-width="1" />
<defs><linearGradient id="tg" x1="0" x2="1" y1="0" y2="0"><stop offset="0" stop-color="#2a2a2a"/><stop offset="1" stop-color="#f2f2f2"/></linearGradient></defs>
<rect x="7.10" y="211.60" width="8.40" height="7.20" fill="url(#tg)" stroke="#dadada" stroke-width="0.8" rx="0" />
<path d="M16.00 221.10 l1.9 0 l0 -1.9 Z" fill="#c0c0c0" stroke="none" stroke-width="1" />
<path d="M11.3 224.6 q3.2 4 3.2 6 a3.2 3.2 0 0 1 -6.4 0 q0 -2 3.2 -6 Z" fill="#dadada" stroke="none" stroke-width="1" />
<path d="M16.00 235.10 l1.9 0 l0 -1.9 Z" fill="#c0c0c0" stroke="none" stroke-width="1" />
<circle cx="12.4" cy="241.2" r="2.4" fill="#bdbdbd" stroke="#f0f0f0" stroke-width="0.8"/>
<line x1="10.60" y1="243.10" x2="7.40" y2="246.60" stroke="#f0f0f0" stroke-width="1.2" />
<path d="M16.00 248.50 l1.9 0 l0 -1.9 Z" fill="#c0c0c0" stroke="none" stroke-width="1" />
<path d="M7.700000000000001 261.2 l0.7 -3.9 l3.1 -2.9 l2.9 2.7 l-2.9 3.3 Z" fill="none" stroke="#dadada" stroke-width="0.85" />
<circle cx="11.0" cy="257.5" r="0.85" fill="#dadada"/>
<path d="M12.5 253.1 l2.7 2.6" fill="none" stroke="#f0f0f0" stroke-width="1.6" />
<path d="M16.00 262.90 l1.9 0 l0 -1.9 Z" fill="#c0c0c0" stroke="none" stroke-width="1" />
<path d="M8.600000000000001 266.3 h5.8 v2 h-0.7 l-0.3 -1 h-1.1 v5.3 l0.9 0.3 v0.7 h-3.4 v-0.7 l0.9 -0.3 v-5.3 h-1.1 l-0.3 1 h-0.7 Z" fill="#f0f0f0" stroke="none" stroke-width="1" />
<path d="M16.00 275.90 l1.9 0 l0 -1.9 Z" fill="#c0c0c0" stroke="none" stroke-width="1" />
<path d="M9.600000000000001 279.09999999999997 l4.6 4.9 h-2 l1.3 2.9 l-1.2 0.6 l-1.3 -2.9 l-1.4 1.4 Z" fill="#1c1c1c" stroke="#f0f0f0" stroke-width="0.7" />
<path d="M16.00 289.60 l1.9 0 l0 -1.9 Z" fill="#c0c0c0" stroke="none" stroke-width="1" />
<line x1="7.30" y1="300.60" x2="14.90" y2="293.00" stroke="#dadada" stroke-width="0.9" />
<path d="M16.00 302.70 l1.9 0 l0 -1.9 Z" fill="#c0c0c0" stroke="none" stroke-width="1" />
<path d="M9.100000000000001 314.9 q-1.6 -1.6 -3 -4 q0.6 -1 1.7 -0.1 l0.9 1 v-4.4 q0.6 -0.9 1.2 0 v-1 q0.7 -0.9 1.3 0 v0.4 q0.7 -0.9 1.3 0 v1.2 q0.7 -0.8 1.3 0 v4 q0 1.8 -1 2.9 Z" fill="#dadada" stroke="none" stroke-width="1" />
<path d="M16.00 316.40 l1.9 0 l0 -1.9 Z" fill="#c0c0c0" stroke="none" stroke-width="1" />
<circle cx="10.5" cy="322.7" r="3" fill="none" stroke="#dadada" stroke-width="1"/>
<line x1="12.70" y1="324.90" x2="15.70" y2="328.10" stroke="#dadada" stroke-width="1.4" />
<rect x="7.10" y="336.20" width="2.00" height="2.00" fill="#dadada" stroke="none" stroke-width="1" rx="0.4" />
<rect x="10.30" y="336.20" width="2.00" height="2.00" fill="#dadada" stroke="none" stroke-width="1" rx="0.4" />
<rect x="13.50" y="336.20" width="2.00" height="2.00" fill="#dadada" stroke="none" stroke-width="1" rx="0.4" />
<path d="M16.00 341.80 l1.9 0 l0 -1.9 Z" fill="#c0c0c0" stroke="none" stroke-width="1" />
<rect x="3.40" y="347.40" width="2.80" height="2.80" fill="#1a1a1a" stroke="#dadada" stroke-width="0.5" rx="0" />
<rect x="5.00" y="349.00" width="2.80" height="2.80" fill="#fff" stroke="#dadada" stroke-width="0.5" rx="0" />
<path d="M12.6 348.0 q3.2 -0.4 3.4 3.0 M11.8 348.0 l1.6 -1.2 v2.4 Z M16.0 351.6 l-1.2 -1.5 h2.4 Z" fill="#dadada" stroke="#dadada" stroke-width="0.6" />
<rect x="8.80" y="359.80" width="9.80" height="9.60" fill="#ffffff" stroke="#3a3a3a" stroke-width="0.5" rx="0" />
<rect x="3.30" y="355.90" width="9.70" height="8.70" fill="#f1f1f1" stroke="#3a3a3a" stroke-width="0.6" rx="0" />
<rect x="7.00" y="376.20" width="8.60" height="6.40" fill="none" stroke="#dadada" stroke-width="0.8" rx="0.5" />
<circle cx="11.3" cy="379.4" r="1.7" fill="none" stroke="#dadada" stroke-width="0.7"/>
<rect x="8.60" y="389.80" width="7.20" height="4.80" fill="none" stroke="#dadada" stroke-width="0.8" rx="0.8" />
<rect x="6.60" y="391.80" width="6.00" height="4.80" fill="#535353" stroke="#dadada" stroke-width="0.8" rx="0.8" />
<path d="M16.00 400.50 l1.9 0 l0 -1.9 Z" fill="#c0c0c0" stroke="none" stroke-width="1" />
</g>
<g id="dock">
<path d="M645.7 33.5 L644.2 35 L645.7 36.5 M648.1 33.5 L646.6 35 L648.1 36.5" fill="none" stroke="#f4f4f4" stroke-width="0.9" />
<path d="M791.7 33.5 L793.2 35 L791.7 36.5 M794.1 33.5 L795.6 35 L794.1 36.5" fill="none" stroke="#f4f4f4" stroke-width="0.9" />
<rect x="636.60" y="40.60" width="0.80" height="0.70" fill="#474747" stroke="none" stroke-width="1" rx="0" />
<rect x="638.10" y="40.60" width="0.80" height="0.70" fill="#474747" stroke="none" stroke-width="1" rx="0" />
<rect x="639.60" y="40.60" width="0.80" height="0.70" fill="#474747" stroke="none" stroke-width="1" rx="0" />
<rect x="641.10" y="40.60" width="0.80" height="0.70" fill="#474747" stroke="none" stroke-width="1" rx="0" />
<rect x="642.60" y="40.60" width="0.80" height="0.70" fill="#474747" stroke="none" stroke-width="1" rx="0" />
<rect x="644.10" y="40.60" width="0.80" height="0.70" fill="#474747" stroke="none" stroke-width="1" rx="0" />
<rect x="645.60" y="40.60" width="0.80" height="0.70" fill="#474747" stroke="none" stroke-width="1" rx="0" />
<rect x="637.20" y="45.60" width="2.20" height="2.00" fill="none" stroke="#e6e6e6" stroke-width="0.6" rx="0" />
<rect x="637.20" y="48.60" width="2.20" height="2.00" fill="none" stroke="#e6e6e6" stroke-width="0.6" rx="0" />
<rect x="637.00" y="51.60" width="2.60" height="2.80" fill="#e6e6e6" stroke="none" stroke-width="1" rx="0" />
<path d="M642.2 46.6 q3.4 0.6 2.6 4 q-0.6 2 -2.4 2.8" fill="none" stroke="#e6e6e6" stroke-width="1" />
<path d="M641.2 46.6 l2.2 -1.4 v2.8 Z" fill="#e6e6e6" stroke="none" stroke-width="1" />
<path d="M637.4 61.2 h7.4 v4.8 h-4.2 l-1.6 1.7 v-1.7 h-1.6 Z" fill="#d8d8d8" stroke="none" stroke-width="1" />
<text x="656.40" y="47.06" font-size="6.0" fill="#ffffff" stroke="#ffffff" font-weight="bold" textLength="13.20" lengthAdjust="spacingAndGlyphs" transform="rotate(0.05 656.4 47.1)">Color</text>
<text x="678.40" y="46.99" font-size="5.8" fill="#c4c4c4" stroke="#c4c4c4" textLength="22.40" lengthAdjust="spacingAndGlyphs" transform="rotate(0.05 678.4 47.0)">Swatches</text>
<text x="710.00" y="46.99" font-size="5.8" fill="#c4c4c4" stroke="#c4c4c4" textLength="23.60" lengthAdjust="spacingAndGlyphs" transform="rotate(0.05 710.0 47.0)">Gradients</text>
<text x="742.60" y="46.99" font-size="5.8" fill="#c4c4c4" stroke="#c4c4c4" textLength="20.60" lengthAdjust="spacingAndGlyphs" transform="rotate(0.05 742.6 47.0)">Patterns</text>
<line x1="673.70" y1="38.50" x2="673.70" y2="52.30" stroke="#383838" stroke-width="0.6" />
<line x1="705.90" y1="38.50" x2="705.90" y2="52.30" stroke="#383838" stroke-width="0.6" />
<line x1="738.00" y1="38.50" x2="738.00" y2="52.30" stroke="#383838" stroke-width="0.6" />
<line x1="767.40" y1="38.50" x2="767.40" y2="52.30" stroke="#383838" stroke-width="0.6" />
<line x1="791.60" y1="43.60" x2="796.60" y2="43.60" stroke="#9a9a9a" stroke-width="0.8" />
<line x1="791.60" y1="45.10" x2="796.60" y2="45.10" stroke="#9a9a9a" stroke-width="0.8" />
<line x1="791.60" y1="46.60" x2="796.60" y2="46.60" stroke="#9a9a9a" stroke-width="0.8" />
<rect x="662.20" y="63.80" width="9.60" height="9.40" fill="#ffffff" stroke="#3c3c3c" stroke-width="0.5" rx="0" />
<rect x="656.90" y="58.70" width="10.00" height="9.50" fill="#efefef" stroke="#3c3c3c" stroke-width="0.6" rx="0" />
<rect x="656.40" y="58.20" width="11.00" height="10.50" fill="none" stroke="#d0d0d0" stroke-width="0.4" rx="0" />
<defs><linearGradient id="cfh" x1="0" x2="1" y1="0" y2="0"><stop offset="0" stop-color="#ffffff"/><stop offset="1" stop-color="#0a84ff"/></linearGradient><linearGradient id="cfv" x1="0" x2="0" y1="0" y2="1"><stop offset="0" stop-color="#000" stop-opacity="0"/><stop offset="1" stop-color="#000" stop-opacity="1"/></linearGradient><linearGradient id="hue" x1="0" x2="0" y1="0" y2="1"><stop offset="0" stop-color="#ff0000"/><stop offset="0.17" stop-color="#ff00ff"/><stop offset="0.33" stop-color="#0000ff"/><stop offset="0.5" stop-color="#00ffff"/><stop offset="0.67" stop-color="#00ff00"/><stop offset="0.83" stop-color="#ffff00"/><stop offset="1" stop-color="#ff0000"/></linearGradient></defs>
<rect x="675.20" y="56.40" width="97.20" height="47.20" fill="url(#cfh)" stroke="none" stroke-width="1" rx="0" />
<rect x="675.20" y="56.40" width="97.20" height="47.20" fill="url(#cfv)" stroke="none" stroke-width="1" rx="0" />
<circle cx="676.2" cy="57.8" r="1.5" fill="none" stroke="#ffffff" stroke-width="0.7"/><circle cx="676.2" cy="57.8" r="2.1" fill="none" stroke="#222" stroke-width="0.4"/>
<rect x="781.40" y="56.40" width="10.10" height="47.20" fill="url(#hue)" stroke="none" stroke-width="1" rx="0" />
<path d="M776.3 72.9 L780.3 75.4 L776.3 77.9 Z" fill="#f4f4f4" stroke="#8a8a8a" stroke-width="0.4" />
</g>
<g id="props">
<text x="656.40" y="125.06" font-size="6.0" fill="#ffffff" stroke="#ffffff" font-weight="bold" textLength="25.60" lengthAdjust="spacingAndGlyphs" transform="rotate(0.05 656.4 125.1)">Properties</text>
<text x="691.00" y="124.99" font-size="5.8" fill="#c4c4c4" stroke="#c4c4c4" textLength="30.50" lengthAdjust="spacingAndGlyphs" transform="rotate(0.05 691.0 125.0)">Adjustments</text>
<text x="730.80" y="124.99" font-size="5.8" fill="#c4c4c4" stroke="#c4c4c4" textLength="20.80" lengthAdjust="spacingAndGlyphs" transform="rotate(0.05 730.8 125.0)">Libraries</text>
<line x1="686.00" y1="116.20" x2="686.00" y2="130.70" stroke="#383838" stroke-width="0.6" />
<line x1="725.70" y1="116.20" x2="725.70" y2="130.70" stroke="#383838" stroke-width="0.6" />
<line x1="756.20" y1="116.20" x2="756.20" y2="130.70" stroke="#383838" stroke-width="0.6" />
<line x1="791.60" y1="122.00" x2="796.60" y2="122.00" stroke="#9a9a9a" stroke-width="0.8" />
<line x1="791.60" y1="123.50" x2="796.60" y2="123.50" stroke="#9a9a9a" stroke-width="0.8" />
<line x1="791.60" y1="125.00" x2="796.60" y2="125.00" stroke="#9a9a9a" stroke-width="0.8" />
<rect x="658.40" y="135.40" width="9.60" height="9.50" fill="#2e2e2e" stroke="#1e1e1e" stroke-width="0.6" rx="0" />
<rect x="660.20" y="137.40" width="6.00" height="5.50" fill="none" stroke="#e6e6e6" stroke-width="0.7" rx="0" />
<path d="M660.4 142.6 l1.8 -2.4 l1.3 1.4 l1 -0.9 l1.5 1.9 Z" fill="#e6e6e6" stroke="none" stroke-width="1" />
<text x="672.00" y="142.49" font-size="5.8" fill="#e0e0e0" stroke="#e0e0e0" textLength="24.40" lengthAdjust="spacingAndGlyphs" transform="rotate(0.05 672.0 142.5)">Pixel Layer</text>
<line x1="652.00" y1="149.00" x2="791.50" y2="149.00" stroke="#444444" stroke-width="0.7" />
<path d="M655.9 154.6 L657.8 156.6 L659.6999999999999 154.6" fill="none" stroke="#c8c8c8" stroke-width="0.7" />
<text x="663.90" y="157.96" font-size="6.0" fill="#f0f0f0" stroke="#f0f0f0" font-weight="bold" textLength="26.50" lengthAdjust="spacingAndGlyphs" transform="rotate(0.05 663.9 158.0)">Transform</text>
<text x="675.60" y="170.99" font-size="5.8" fill="#7d7d7d" stroke="#7d7d7d" textLength="4.60" lengthAdjust="spacingAndGlyphs" transform="rotate(0.05 675.6 171.0)">W</text>
<rect x="682.50" y="165.00" width="27.00" height="7.70" fill="#484848" stroke="#5c5c5c" stroke-width="0.5" rx="0.8" />
<text x="684.70" y="170.97" font-size="5.6" fill="#7d7d7d" stroke="#7d7d7d" textLength="16.50" lengthAdjust="spacingAndGlyphs" transform="rotate(0.05 684.7 171.0)">364 px</text>
<text x="720.60" y="170.99" font-size="5.8" fill="#7d7d7d" stroke="#7d7d7d" textLength="3.40" lengthAdjust="spacingAndGlyphs" transform="rotate(0.05 720.6 171.0)">X</text>
<rect x="725.70" y="165.00" width="27.30" height="7.70" fill="#484848" stroke="#5c5c5c" stroke-width="0.5" rx="0.8" />
<text x="727.90" y="170.97" font-size="5.6" fill="#7d7d7d" stroke="#7d7d7d" textLength="16.50" lengthAdjust="spacingAndGlyphs" transform="rotate(0.05 727.9 171.0)">160 px</text>
<text x="676.20" y="183.99" font-size="5.8" fill="#7d7d7d" stroke="#7d7d7d" textLength="3.80" lengthAdjust="spacingAndGlyphs" transform="rotate(0.05 676.2 184.0)">H</text>
<rect x="682.50" y="178.00" width="27.00" height="7.70" fill="#484848" stroke="#5c5c5c" stroke-width="0.5" rx="0.8" />
<text x="684.70" y="183.97" font-size="5.6" fill="#7d7d7d" stroke="#7d7d7d" textLength="16.50" lengthAdjust="spacingAndGlyphs" transform="rotate(0.05 684.7 184.0)">305 px</text>
<text x="720.80" y="183.99" font-size="5.8" fill="#7d7d7d" stroke="#7d7d7d" textLength="3.20" lengthAdjust="spacingAndGlyphs" transform="rotate(0.05 720.8 184.0)">Y</text>
<rect x="725.70" y="178.00" width="27.30" height="7.70" fill="#484848" stroke="#5c5c5c" stroke-width="0.5" rx="0.8" />
<text x="727.90" y="183.97" font-size="5.6" fill="#7d7d7d" stroke="#7d7d7d" textLength="16.50" lengthAdjust="spacingAndGlyphs" transform="rotate(0.05 727.9 184.0)">129 px</text>
<circle cx="662.8" cy="173.6" r="1.5" fill="none" stroke="#dcdcdc" stroke-width="0.8"/><circle cx="662.8" cy="177.4" r="1.5" fill="none" stroke="#dcdcdc" stroke-width="0.8"/>
<line x1="662.80" y1="174.40" x2="662.80" y2="176.60" stroke="#dcdcdc" stroke-width="0.7" />
<path d="M673.4 199.2 L679.2 194.4 M673.4 199.2 H679.6" fill="none" stroke="#d0d0d0" stroke-width="0.8" />
<path d="M676.4 199.2 a3 3 0 0 0 -0.9 -2" fill="none" stroke="#d0d0d0" stroke-width="0.6" />
<rect x="682.50" y="193.00" width="19.70" height="7.20" fill="#484848" stroke="#5c5c5c" stroke-width="0.5" rx="0.8" />
<text x="684.70" y="198.72" font-size="5.6" fill="#7d7d7d" stroke="#7d7d7d" textLength="12.50" lengthAdjust="spacingAndGlyphs" transform="rotate(0.05 684.7 198.7)">0.00°</text>
<rect x="703.30" y="193.00" width="6.80" height="7.20" fill="#484848" stroke="#5c5c5c" stroke-width="0.5" rx="0.8" />
<path d="M705 195.9 L706.7 197.6 L708.4 195.9" fill="none" stroke="#c8c8c8" stroke-width="0.7" />
<path d="M728.3 194.2 L730.9 196.7 L728.3 199.2 Z" fill="none" stroke="#e0e0e0" stroke-width="0.7" />
<path d="M735.5 194.2 L732.9 196.7 L735.5 199.2 Z" fill="#e0e0e0" stroke="#e0e0e0" stroke-width="0.7" />
<line x1="731.90" y1="192.80" x2="731.90" y2="200.60" stroke="#e0e0e0" stroke-width="0.5" stroke-dasharray="1 0.8"/>
<path d="M744.2 192.9 L746.7 195.6 L749.2 192.9 Z" fill="none" stroke="#e0e0e0" stroke-width="0.7" />
<path d="M744.2 200.6 L746.7 197.9 L749.2 200.6 Z" fill="#e0e0e0" stroke="#e0e0e0" stroke-width="0.7" />
<line x1="742.80" y1="196.80" x2="750.60" y2="196.80" stroke="#e0e0e0" stroke-width="0.5" stroke-dasharray="1 0.8"/>
<line x1="652.00" y1="208.70" x2="791.50" y2="208.70" stroke="#444444" stroke-width="0.7" />
<path d="M655.9 215.4 L657.8 217.4 L659.6999999999999 215.4" fill="none" stroke="#c8c8c8" stroke-width="0.7" />
<text x="664.80" y="218.76" font-size="6.0" fill="#f0f0f0" stroke="#f0f0f0" font-weight="bold" textLength="51.00" lengthAdjust="spacingAndGlyphs" transform="rotate(0.05 664.8 218.8)">Align and Distribute</text>
<text x="656.60" y="230.19" font-size="5.8" fill="#d0d0d0" stroke="#d0d0d0" textLength="13.00" lengthAdjust="spacingAndGlyphs" transform="rotate(0.05 656.6 230.2)">Align:</text>
<line x1="660.00" y1="238.70" x2="660.00" y2="246.30" stroke="#e0e0e0" stroke-width="0.8" />
<rect x="661.00" y="239.90" width="3.20" height="2.00" fill="#e0e0e0" stroke="none" stroke-width="1" rx="0" />
<rect x="661.00" y="243.10" width="5.20" height="2.00" fill="#e0e0e0" stroke="none" stroke-width="1" rx="0" />
<line x1="678.00" y1="238.70" x2="678.00" y2="246.30" stroke="#e0e0e0" stroke-width="0.8" />
<rect x="676.20" y="239.90" width="3.60" height="2.00" fill="#e0e0e0" stroke="none" stroke-width="1" rx="0" />
<rect x="675.00" y="243.10" width="6.00" height="2.00" fill="#e0e0e0" stroke="none" stroke-width="1" rx="0" />
<line x1="695.70" y1="238.70" x2="695.70" y2="246.30" stroke="#e0e0e0" stroke-width="0.8" />
<rect x="691.50" y="239.90" width="3.20" height="2.00" fill="#e0e0e0" stroke="none" stroke-width="1" rx="0" />
<rect x="689.50" y="243.10" width="5.20" height="2.00" fill="#e0e0e0" stroke="none" stroke-width="1" rx="0" />
<line x1="713.00" y1="239.70" x2="720.60" y2="239.70" stroke="#e0e0e0" stroke-width="0.8" />
<rect x="714.20" y="240.70" width="2.00" height="5.20" fill="#e0e0e0" stroke="none" stroke-width="1" rx="0" />
<rect x="717.40" y="240.70" width="2.00" height="3.20" fill="#e0e0e0" stroke="none" stroke-width="1" rx="0" />
<line x1="728.10" y1="242.50" x2="735.70" y2="242.50" stroke="#e0e0e0" stroke-width="0.8" />
<rect x="729.30" y="239.50" width="2.00" height="6.00" fill="#e0e0e0" stroke="none" stroke-width="1" rx="0" />
<rect x="732.50" y="240.70" width="2.00" height="3.60" fill="#e0e0e0" stroke="none" stroke-width="1" rx="0" />
<line x1="743.00" y1="245.30" x2="750.60" y2="245.30" stroke="#e0e0e0" stroke-width="0.8" />
<rect x="744.20" y="239.10" width="2.00" height="5.20" fill="#e0e0e0" stroke="none" stroke-width="1" rx="0" />
<rect x="747.40" y="241.10" width="2.00" height="3.20" fill="#e0e0e0" stroke="none" stroke-width="1" rx="0" />
<circle cx="745.3" cy="258.5" r="0.6" fill="#e0e0e0"/>
<circle cx="747.5" cy="258.5" r="0.6" fill="#e0e0e0"/>
<circle cx="749.7" cy="258.5" r="0.6" fill="#e0e0e0"/>
<line x1="652.00" y1="265.40" x2="791.50" y2="265.40" stroke="#444444" stroke-width="0.7" />
<path d="M655.9 272.5 L657.8 274.5 L659.6999999999999 272.5" fill="none" stroke="#c8c8c8" stroke-width="0.7" />
<text x="664.40" y="275.86" font-size="6.0" fill="#f0f0f0" stroke="#f0f0f0" font-weight="bold" textLength="35.00" lengthAdjust="spacingAndGlyphs" transform="rotate(0.05 664.4 275.9)">Quick Actions</text>
<rect x="791.60" y="150.00" width="8.40" height="135.00" fill="#4a4a4a" stroke="none" stroke-width="1" rx="0" />
<rect x="792.60" y="158.00" width="6.00" height="88.70" fill="#686868" stroke="none" stroke-width="1" rx="0" />
<path d="M793.6 155 L795.6 153 L797.6 155" fill="none" stroke="#8a8a8a" stroke-width="0.7" />
<path d="M793.6 279 L795.6 281 L797.6 279" fill="none" stroke="#8a8a8a" stroke-width="0.7" />
</g>
<g id="layers">
<text x="656.40" y="308.96" font-size="6.0" fill="#ffffff" stroke="#ffffff" font-weight="bold" textLength="15.80" lengthAdjust="spacingAndGlyphs" transform="rotate(0.05 656.4 309.0)">Layers</text>
<text x="681.00" y="308.89" font-size="5.8" fill="#c4c4c4" stroke="#c4c4c4" textLength="22.00" lengthAdjust="spacingAndGlyphs" transform="rotate(0.05 681.0 308.9)">Channels</text>
<text x="712.00" y="308.89" font-size="5.8" fill="#c4c4c4" stroke="#c4c4c4" textLength="13.40" lengthAdjust="spacingAndGlyphs" transform="rotate(0.05 712.0 308.9)">Paths</text>
<line x1="676.30" y1="299.80" x2="676.30" y2="314.50" stroke="#383838" stroke-width="0.6" />
<line x1="707.40" y1="299.80" x2="707.40" y2="314.50" stroke="#383838" stroke-width="0.6" />
<line x1="730.20" y1="299.80" x2="730.20" y2="314.50" stroke="#383838" stroke-width="0.6" />
<line x1="791.60" y1="305.60" x2="796.60" y2="305.60" stroke="#9a9a9a" stroke-width="0.8" />
<line x1="791.60" y1="307.10" x2="796.60" y2="307.10" stroke="#9a9a9a" stroke-width="0.8" />
<line x1="791.60" y1="308.60" x2="796.60" y2="308.60" stroke="#9a9a9a" stroke-width="0.8" />
<rect x="654.30" y="320.20" width="43.90" height="8.50" fill="#4a4a4a" stroke="#5e5e5e" stroke-width="0.5" rx="0.8" />
<circle cx="659.3" cy="323.8" r="1.8" fill="none" stroke="#f0f0f0" stroke-width="1"/>
<line x1="660.70" y1="325.20" x2="662.70" y2="327.30" stroke="#f0f0f0" stroke-width="1.2" />
<text x="665.40" y="326.59" font-size="5.8" fill="#7d7d7d" stroke="#7d7d7d" textLength="11.00" lengthAdjust="spacingAndGlyphs" transform="rotate(0.05 665.4 326.6)">Kind</text>
<path d="M693.4 323.7 L695 325.3 L696.6 323.7" fill="none" stroke="#6e6e6e" stroke-width="0.7" />
<rect x="704.60" y="321.20" width="6.80" height="5.80" fill="#e0e0e0" stroke="none" stroke-width="1" rx="0.6" />
<rect x="705.60" y="322.20" width="4.80" height="3.80" fill="#535353" stroke="none" stroke-width="1" rx="0" />
<path d="M705.8 325.8 l1.5 -2 l1 1.1 l0.8 -0.7 l1.2 1.6 Z" fill="#e0e0e0" stroke="none" stroke-width="1" />
<circle cx="720.5" cy="324.2" r="3" fill="none" stroke="#e0e0e0" stroke-width="0.8"/>
<path d="M718.4 326.3 A3 3 0 0 0 722.6 322.1 Z" fill="#e0e0e0" stroke="none" stroke-width="1" />
<path d="M730.6 321.6 h5.6 v1.7 h-0.6 l-0.3 -0.9 h-1.3 v4.2 l0.8 0.2 v0.5 h-2.8 v-0.5 l0.8 -0.2 v-4.2 h-1.3 l-0.3 0.9 h-0.6 Z" fill="#e6e6e6" stroke="none" stroke-width="1" />
<rect x="743.20" y="321.60" width="5.20" height="5.20" fill="none" stroke="#e0e0e0" stroke-width="0.8" rx="0" />
<rect x="742.30" y="320.70" width="1.80" height="1.80" fill="#e0e0e0" stroke="none" stroke-width="1" rx="0" />
<rect x="747.50" y="320.70" width="1.80" height="1.80" fill="#e0e0e0" stroke="none" stroke-width="1" rx="0" />
<rect x="742.30" y="325.90" width="1.80" height="1.80" fill="#e0e0e0" stroke="none" stroke-width="1" rx="0" />
<rect x="747.50" y="325.90" width="1.80" height="1.80" fill="#e0e0e0" stroke="none" stroke-width="1" rx="0" />
<path d="M755.6 321.4 h3.6 l1.8 1.8 v4.4 h-5.4 Z" fill="none" stroke="#e0e0e0" stroke-width="0.7" />
<rect x="757.60" y="324.40" width="4.00" height="3.00" fill="#e0e0e0" stroke="none" stroke-width="1" rx="0" />
<path d="M758.4 324.4 v-0.9 a1.2 1.2 0 0 1 2.4 0 v0.9" fill="none" stroke="#e0e0e0" stroke-width="0.6" />
<rect x="767.90" y="320.40" width="3.60" height="7.80" fill="#3a3a3a" stroke="none" stroke-width="1" rx="1.8" />
<circle cx="769.7" cy="322.2" r="2.1" fill="#e8e8e8"/>
<rect x="654.10" y="334.60" width="65.80" height="8.90" fill="#484848" stroke="#5c5c5c" stroke-width="0.5" rx="0.8" />
<text x="658.00" y="341.29" font-size="5.8" fill="#7d7d7d" stroke="#7d7d7d" textLength="19.40" lengthAdjust="spacingAndGlyphs" transform="rotate(0.05 658.0 341.3)">Normal</text>
<path d="M714.6 338.4 L716.2 340 L717.8 338.4" fill="none" stroke="#6e6e6e" stroke-width="0.7" />
<text x="724.00" y="341.19" font-size="5.8" fill="#e0e0e0" stroke="#e0e0e0" textLength="18.60" lengthAdjust="spacingAndGlyphs" transform="rotate(0.05 724.0 341.2)">Opacity:</text>
<rect x="745.80" y="334.60" width="17.60" height="8.90" fill="#484848" stroke="#5c5c5c" stroke-width="0.5" rx="0.8" />
<text x="748.40" y="341.22" font-size="5.6" fill="#7d7d7d" stroke="#7d7d7d" textLength="12.60" lengthAdjust="spacingAndGlyphs" transform="rotate(0.05 748.4 341.2)">100%</text>
<rect x="764.50" y="334.60" width="6.60" height="8.90" fill="#484848" stroke="#5c5c5c" stroke-width="0.5" rx="0.8" />
<path d="M766.2 338.4 L767.8 340 L769.4 338.4" fill="none" stroke="#c8c8c8" stroke-width="0.7" />
<line x1="652.00" y1="345.60" x2="791.50" y2="345.60" stroke="#474747" stroke-width="0.6" />
<line x1="652.00" y1="331.40" x2="791.50" y2="331.40" stroke="#4a4a4a" stroke-width="0.6" />
<text x="655.00" y="355.59" font-size="5.8" fill="#e0e0e0" stroke="#e0e0e0" textLength="11.50" lengthAdjust="spacingAndGlyphs" transform="rotate(0.05 655.0 355.6)">Lock:</text>
<rect x="672.10" y="350.50" width="5.60" height="5.60" fill="none" stroke="#e0e0e0" stroke-width="0.7" rx="0" />
<rect x="672.50" y="350.90" width="1.60" height="1.60" fill="#e0e0e0" stroke="none" stroke-width="1" rx="0" />
<rect x="675.70" y="350.90" width="1.60" height="1.60" fill="#e0e0e0" stroke="none" stroke-width="1" rx="0" />
<rect x="674.10" y="352.50" width="1.60" height="1.60" fill="#e0e0e0" stroke="none" stroke-width="1" rx="0" />
<rect x="672.50" y="354.10" width="1.60" height="1.60" fill="#e0e0e0" stroke="none" stroke-width="1" rx="0" />
<rect x="675.70" y="354.10" width="1.60" height="1.60" fill="#e0e0e0" stroke="none" stroke-width="1" rx="0" />
<path d="M689.7 349.7 l0.8 0.8 l-4.2 4.6 l-1.2 -1.2 Z" fill="#e0e0e0" stroke="none" stroke-width="1" />
<path d="M684.8000000000001 354.6 l1.2 1.2 q-0.8 1.6 -2.8 1.3 q1.2 -0.6 0.8 -1.6 Z" fill="#e0e0e0" stroke="none" stroke-width="1" />
<path d="M698.1 349.5 l1.4 1.6 h-0.9 v1.7 h1.7 v-0.9 l1.6 1.4 l-1.6 1.4 v-0.9 h-1.7 v1.7 h0.9 l-1.4 1.6 l-1.4 -1.6 h0.9 v-1.7 h-1.7 v0.9 l-1.6 -1.4 l1.6 -1.4 v0.9 h1.7 v-1.7 h-0.9 Z" fill="#e0e0e0" stroke="none" stroke-width="1" />
<path d="M707.7 349.7 v5.4 h5.4 M705.9 351.5 h5.4 v5.4" fill="none" stroke="#e0e0e0" stroke-width="0.8" />
<path d="M711.1 350.1 l2.2 1.2" fill="none" stroke="#e0e0e0" stroke-width="0.7" />
<rect x="718.30" y="352.70" width="5.20" height="4.00" fill="#e0e0e0" stroke="none" stroke-width="1" rx="0.5" />
<path d="M719.4 352.7 v-1.2 a1.5 1.5 0 0 1 3 0 v1.2" fill="none" stroke="#e0e0e0" stroke-width="0.8" />
<text x="735.40" y="355.49" font-size="5.8" fill="#e0e0e0" stroke="#e0e0e0" textLength="7.20" lengthAdjust="spacingAndGlyphs" transform="rotate(0.05 735.4 355.5)">Fill:</text>
<rect x="745.80" y="349.00" width="17.60" height="8.80" fill="#484848" stroke="#5c5c5c" stroke-width="0.5" rx="0.8" />
<text x="748.40" y="355.52" font-size="5.6" fill="#7d7d7d" stroke="#7d7d7d" textLength="12.60" lengthAdjust="spacingAndGlyphs" transform="rotate(0.05 748.4 355.5)">100%</text>
<rect x="764.50" y="349.00" width="6.60" height="8.80" fill="#484848" stroke="#5c5c5c" stroke-width="0.5" rx="0.8" />
<path d="M766.2 352.8 L767.8 354.4 L769.4 352.8" fill="none" stroke="#c8c8c8" stroke-width="0.7" />
<rect x="652.00" y="361.20" width="139.50" height="109.80" fill="#4e4e4e" stroke="none" stroke-width="1" rx="0" />
<rect x="791.50" y="361.20" width="8.50" height="109.80" fill="#484848" stroke="none" stroke-width="1" rx="0" />
<rect x="652.00" y="361.60" width="139.50" height="19.00" fill="#535353" stroke="none" stroke-width="1" rx="0" />
<line x1="667.20" y1="361.60" x2="667.20" y2="401.40" stroke="#444444" stroke-width="0.6" />
<line x1="652.00" y1="380.70" x2="791.50" y2="380.70" stroke="#444444" stroke-width="0.5" />
<rect x="656.70" y="368.80" width="6.10" height="5.90" fill="#4e4e4e" stroke="#666666" stroke-width="0.5" rx="0" />
<rect x="669.60" y="363.90" width="16.50" height="15.10" fill="#08080c" stroke="none" stroke-width="1" rx="0" />
<defs><radialGradient id="l0g" cx="0.4" cy="0" r="0.6"><stop offset="0" stop-color="#7a1020" stop-opacity="0.9"/><stop offset="1" stop-color="#08080c" stop-opacity="0"/></radialGradient></defs>
<rect x="669.60" y="363.90" width="16.50" height="8.10" fill="url(#l0g)" stroke="none" stroke-width="1" rx="0" />
<path d="M672.4 368.2 l3.4 -0.9 l-0.7 5.6 l-3.6 0.9 Z" fill="#1450c8" stroke="none" stroke-width="1" />
<path d="M676.3 366.4 l4.3 -0.7 l-0.8 8 l-4.4 0.9 Z" fill="#f26c12" stroke="none" stroke-width="1" />
<path d="M681.1 367.6 l3.6 -0.5 l-0.7 6.2 l-3.6 0.8 Z" fill="#28b432" stroke="none" stroke-width="1" />
<path d="M673.2 371.8 l1.8 -2.6 M677.6 372.4 l0.4 -4 l1.4 -0.2 l-0.2 1.8 l-1.4 0.3 M682.2 368.8 l1.8 -0.3 M683 368.8 l-0.4 3.6" fill="none" stroke="#f4f4f4" stroke-width="0.9" />
<rect x="674.20" y="375.50" width="5.20" height="1.60" fill="#f0f0f0" stroke="none" stroke-width="1" rx="0.3" />
<rect x="680.60" y="375.60" width="3.40" height="1.40" fill="#7c7c94" stroke="none" stroke-width="1" rx="0.3" />
<text x="690.80" y="373.69" font-size="5.8" fill="#e8e8e8" stroke="#e8e8e8" textLength="17.40" lengthAdjust="spacingAndGlyphs" transform="rotate(0.05 690.8 373.7)">Layer 0</text>
<rect x="652.00" y="381.00" width="139.50" height="20.20" fill="#6b6b6b" stroke="none" stroke-width="1" rx="0" />
<line x1="667.20" y1="381.00" x2="667.20" y2="401.20" stroke="#5a5a5a" stroke-width="0.6" />
<path d="M656.4 392.7 q3.6 -4.6 7.2 0 q-3.6 4.6 -7.2 0 Z" fill="#f6f6f6" stroke="none" stroke-width="1" />
<circle cx="660" cy="392.7" r="1.45" fill="#4a4a4a"/>
<defs><pattern id="chk2" width="3.2" height="3.2" patternUnits="userSpaceOnUse" x="669.6" y="383.5"><rect width="3.2" height="3.2" fill="#fff"/><rect width="1.6" height="1.6" fill="#ccc"/><rect x="1.6" y="1.6" width="1.6" height="1.6" fill="#ccc"/></pattern></defs>
<rect x="669.60" y="383.50" width="17.00" height="16.00" fill="url(#chk2)" stroke="none" stroke-width="1" rx="0" />
<rect x="668.80" y="382.70" width="18.60" height="17.60" fill="none" stroke="#f0f0f0" stroke-width="0.7" rx="1" stroke-dasharray="6 2.6" stroke-dashoffset="3"/>
<text x="690.80" y="394.19" font-size="5.8" fill="#ffffff" stroke="#ffffff" textLength="17.00" lengthAdjust="spacingAndGlyphs" transform="rotate(0.05 690.8 394.2)">Layer 1</text>
<rect x="652.00" y="471.00" width="148.00" height="11.00" fill="#535353" stroke="none" stroke-width="1" rx="0" />
<line x1="652.00" y1="471.00" x2="800.00" y2="471.00" stroke="#444444" stroke-width="0.6" />
<rect x="694.6" y="475.3" width="3.4" height="2.8" rx="1.4" fill="none" stroke="#767676" stroke-width="0.7"/><rect x="697.6" y="475.3" width="3.4" height="2.8" rx="1.4" fill="none" stroke="#767676" stroke-width="0.7"/>
<text x="709.00" y="478.99" font-size="7.2" fill="#d8d8d8" stroke="#d8d8d8" font-weight="bold" textLength="6.20" lengthAdjust="spacingAndGlyphs" transform="rotate(0.05 709.0 479.0)" style="font-family:'Liberation Serif',serif" font-style="italic">fx</text>
<rect x="722.20" y="473.90" width="7.00" height="5.20" fill="#d8d8d8" stroke="none" stroke-width="1" rx="0.5" />
<circle cx="725.7" cy="476.5" r="1.6" fill="#535353"/>
<circle cx="739.8" cy="476.5" r="2.7" fill="none" stroke="#d8d8d8" stroke-width="0.8"/>
<path d="M737.9 478.4 A2.7 2.7 0 0 0 741.7 474.59999999999997 Z" fill="#d8d8d8" stroke="none" stroke-width="1" />
<path d="M750.8 473.9 h2.6 l0.8 0.9 h3.8 v4.5 h-7.2 Z" fill="#d8d8d8" stroke="none" stroke-width="1" />
<rect x="765.40" y="473.70" width="6.20" height="5.80" fill="none" stroke="#d8d8d8" stroke-width="0.8" rx="1" />
<path d="M768.5 474.9 v3.4 M766.8 476.59999999999997 h3.4" fill="none" stroke="#d8d8d8" stroke-width="0.7" />
<path d="M779.4 475.09999999999997 h4.8 v4.6 h-4.8 Z M778.8 474.4 h6 M780.8 474.4 v-0.9 h2 v0.9" fill="none" stroke="#d8d8d8" stroke-width="0.7" />
<path d="M780.9 476.09999999999997 v2.8 M782.7 476.09999999999997 v2.8" fill="none" stroke="#d8d8d8" stroke-width="0.5" />
</g>
</svg>
</div></body></html>
